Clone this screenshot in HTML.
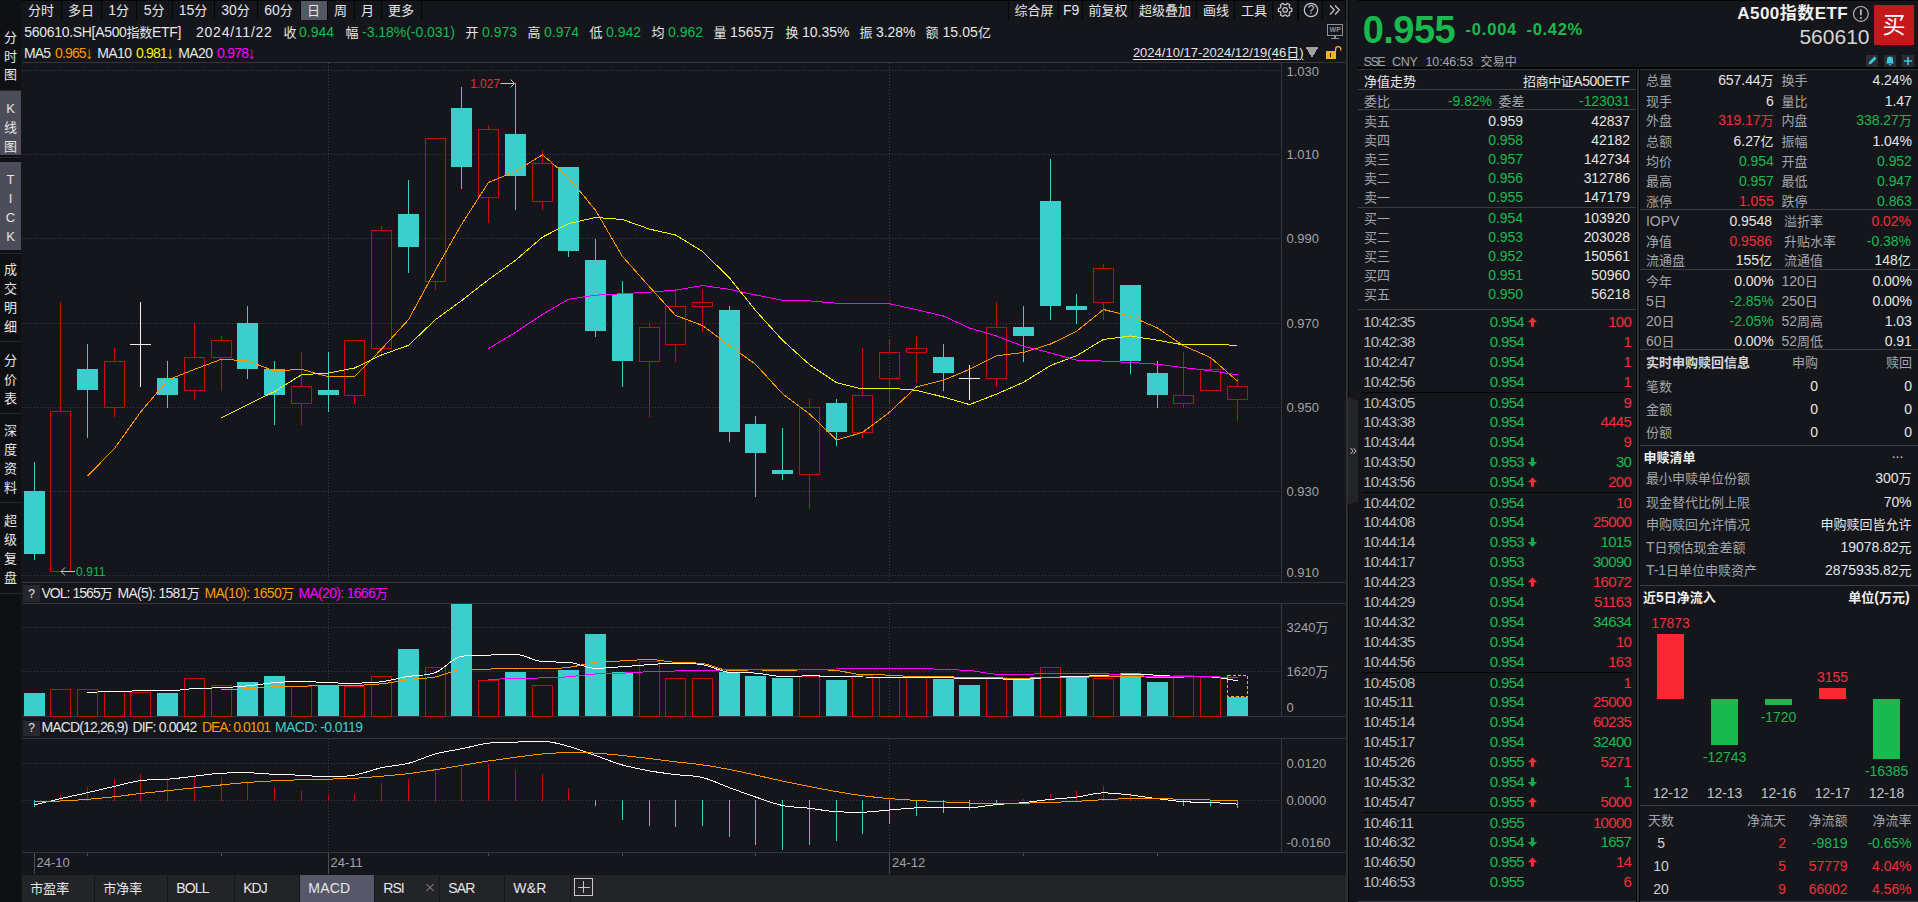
<!DOCTYPE html>
<html lang="zh"><head><meta charset="utf-8"><title>A500指数ETF 560610</title>
<style>
html,body{margin:0;padding:0;background:#14161b;}
body{width:1918px;height:902px;position:relative;overflow:hidden;font-family:"Liberation Sans","Noto Sans CJK SC",sans-serif;}
.t{position:absolute;white-space:nowrap;font-size:14px;letter-spacing:var(--ls,-.06px);--cs:13px;}
.c{font-size:var(--cs);letter-spacing:var(--cls,0);}
.b{position:absolute;}
svg{position:absolute;left:0;top:0;}
svg{shape-rendering:crispEdges;}
svg .aa{shape-rendering:geometricPrecision;}
.bold{font-weight:bold;}
.ar{font-size:17px;line-height:0;position:relative;top:.5px;margin-left:-1px;}
.tk{font-size:15px;letter-spacing:-.68px;}
</style></head><body>
<div class="b" style="left:0px;top:0px;width:21px;height:902px;background:#0e1014;"></div>
<div class="b" style="left:0px;top:91px;width:21px;height:64px;background:#4c4d59;"></div>
<div class="b" style="left:0px;top:162px;width:21px;height:88px;background:#4c4d59;"></div>
<div class="b" style="left:0px;top:90px;width:21px;height:1px;background:#26282d;"></div>
<div class="b" style="left:0px;top:157px;width:21px;height:1px;background:#26282d;"></div>
<div class="b" style="left:0px;top:253px;width:21px;height:1px;background:#26282d;"></div>
<div class="b" style="left:0px;top:341px;width:21px;height:1px;background:#26282d;"></div>
<div class="b" style="left:0px;top:413px;width:21px;height:1px;background:#26282d;"></div>
<div class="b" style="left:0px;top:502px;width:21px;height:1px;background:#26282d;"></div>
<div class="b" style="left:0px;top:593px;width:21px;height:1px;background:#26282d;"></div>
<div class="b" style="left:22px;top:0px;width:1324px;height:1px;background:#050607;"></div>
<div class="b" style="left:61px;top:1px;width:1px;height:19px;background:#050607;"></div>
<div class="b" style="left:101px;top:1px;width:1px;height:19px;background:#050607;"></div>
<div class="b" style="left:136px;top:1px;width:1px;height:19px;background:#050607;"></div>
<div class="b" style="left:172px;top:1px;width:1px;height:19px;background:#050607;"></div>
<div class="b" style="left:214px;top:1px;width:1px;height:19px;background:#050607;"></div>
<div class="b" style="left:257px;top:1px;width:1px;height:19px;background:#050607;"></div>
<div class="b" style="left:300px;top:1px;width:1px;height:19px;background:#050607;"></div>
<div class="b" style="left:301px;top:1px;width:26px;height:19px;background:#565764;"></div>
<div class="b" style="left:327px;top:1px;width:1px;height:19px;background:#050607;"></div>
<div class="b" style="left:354px;top:1px;width:1px;height:19px;background:#050607;"></div>
<div class="b" style="left:381px;top:1px;width:1px;height:19px;background:#050607;"></div>
<div class="b" style="left:421px;top:1px;width:1px;height:19px;background:#050607;"></div>
<div class="b" style="left:1008px;top:1px;width:1px;height:19px;background:#050607;"></div>
<div class="b" style="left:1058px;top:1px;width:1px;height:19px;background:#050607;"></div>
<div class="b" style="left:1082px;top:1px;width:1px;height:19px;background:#050607;"></div>
<div class="b" style="left:1132px;top:1px;width:1px;height:19px;background:#050607;"></div>
<div class="b" style="left:1196px;top:1px;width:1px;height:19px;background:#050607;"></div>
<div class="b" style="left:1234px;top:1px;width:1px;height:19px;background:#050607;"></div>
<div class="b" style="left:1272px;top:1px;width:1px;height:19px;background:#050607;"></div>
<div class="b" style="left:1297px;top:1px;width:2px;height:19px;background:#050607;"></div>
<div class="b" style="left:1322px;top:1px;width:1px;height:19px;background:#050607;"></div>
<div class="b" style="left:23px;top:585px;width:17px;height:17px;background:#26282d;"></div>
<div class="b" style="left:23px;top:721px;width:17px;height:15px;background:#26282d;"></div>
<div class="b" style="left:22px;top:875px;width:1324px;height:27px;background:#232428;"></div>
<div class="b" style="left:94px;top:875px;width:1px;height:27px;background:#14161b;"></div>
<div class="b" style="left:167px;top:875px;width:1px;height:27px;background:#14161b;"></div>
<div class="b" style="left:234px;top:875px;width:1px;height:27px;background:#14161b;"></div>
<div class="b" style="left:300px;top:875px;width:74px;height:27px;background:#565768;"></div>
<div class="b" style="left:299px;top:875px;width:1px;height:27px;background:#14161b;"></div>
<div class="b" style="left:374px;top:875px;width:1px;height:27px;background:#14161b;"></div>
<div class="b" style="left:439px;top:875px;width:1px;height:27px;background:#14161b;"></div>
<div class="b" style="left:504px;top:875px;width:1px;height:27px;background:#14161b;"></div>
<div class="b" style="left:570px;top:875px;width:1px;height:27px;background:#14161b;"></div>
<div class="b" style="left:1346px;top:0px;width:2px;height:902px;background:#2d2f35;"></div>
<div class="b" style="left:1348px;top:0px;width:1px;height:902px;background:#030404;"></div>
<div class="b" style="left:1345px;top:0px;width:1px;height:21px;background:#050607;"></div>
<div class="b" style="left:1358px;top:0px;width:560px;height:1px;background:#030404;"></div>
<div class="b" style="left:1358px;top:901px;width:560px;height:1px;background:#3a3c42;"></div>
<div class="b" style="left:1874px;top:5px;width:40px;height:40px;background:#c4181c;"></div>
<div class="b" style="left:1866px;top:55px;width:12px;height:12px;background:#2a2c33;"></div>
<div class="b" style="left:1884px;top:55px;width:12px;height:12px;background:#2a2c33;"></div>
<div class="b" style="left:1902px;top:55px;width:12px;height:12px;background:#2a2c33;"></div>
<div class="b" style="left:1358px;top:67px;width:560px;height:2px;background:#030404;"></div>
<div class="b" style="left:1358px;top:69px;width:560px;height:1px;background:#2e3036;"></div>
<div class="b" style="left:1636px;top:69px;width:1px;height:833px;background:#030404;"></div>
<div class="b" style="left:1637px;top:69px;width:2px;height:833px;background:#2e3036;"></div>
<div class="b" style="left:1639px;top:69px;width:1px;height:833px;background:#030404;"></div>
<div class="b" style="left:1358px;top:89px;width:278px;height:1px;background:#3a3c42;"></div>
<div class="b" style="left:1358px;top:109px;width:278px;height:1px;background:#3a3c42;"></div>
<div class="b" style="left:1358px;top:207px;width:278px;height:1px;background:#3a3c42;"></div>
<div class="b" style="left:1358px;top:309px;width:278px;height:1px;background:#3a3c42;"></div>
<div class="b" style="left:1362px;top:392px;width:270px;height:1px;background:#050607;"></div>
<div class="b" style="left:1362px;top:492px;width:270px;height:1px;background:#050607;"></div>
<div class="b" style="left:1362px;top:672px;width:270px;height:1px;background:#050607;"></div>
<div class="b" style="left:1362px;top:812px;width:270px;height:1px;background:#050607;"></div>
<div class="b" style="left:1640px;top:209px;width:278px;height:1px;background:#3a3c42;"></div>
<div class="b" style="left:1640px;top:269px;width:278px;height:1px;background:#3a3c42;"></div>
<div class="b" style="left:1640px;top:349px;width:278px;height:1px;background:#3a3c42;"></div>
<div class="b" style="left:1640px;top:445px;width:278px;height:1px;background:#3a3c42;"></div>
<div class="b" style="left:1640px;top:585px;width:278px;height:1px;background:#3a3c42;"></div>
<div class="b" style="left:1657px;top:634px;width:27px;height:65px;background:#fa2832;"></div>
<div class="b" style="left:1711px;top:699px;width:27px;height:46px;background:#18ba50;"></div>
<div class="b" style="left:1765px;top:699px;width:27px;height:6px;background:#18ba50;"></div>
<div class="b" style="left:1819px;top:688px;width:27px;height:11px;background:#fa2832;"></div>
<div class="b" style="left:1873px;top:699px;width:27px;height:60px;background:#18ba50;"></div>
<div class="b" style="left:1640px;top:805px;width:278px;height:1px;background:#3a3c42;"></div>
<svg width="1918" height="902" viewBox="0 0 1918 902">
<g class="aa" fill="none" stroke="#c8c8cc" stroke-width="1.2" stroke-linejoin="round"><path d="M1290.11 8.17L1291.82 8.35L1291.82 11.45L1290.11 11.63L1289.10 13.38L1289.81 14.95L1287.12 16.50L1286.11 15.10L1284.09 15.10L1283.08 16.50L1280.39 14.95L1281.10 13.38L1280.09 11.63L1278.38 11.45L1278.38 8.35L1280.09 8.17L1281.10 6.42L1280.39 4.85L1283.08 3.30L1284.09 4.70L1286.11 4.70L1287.12 3.30L1289.81 4.85L1289.10 6.42z"/><circle cx="1285.1" cy="9.9" r="2.3"/><circle cx="1311" cy="10" r="6.7"/><path d="M1330 5.5l4.3 4.5-4.3 4.5M1335 5.5l4.3 4.5-4.3 4.5"/></g>
<path d="M1305 46.5h14l-7 11z" fill="#a0a0a0"/>
<g><rect x="1325.5" y="51" width="10" height="8" fill="#f0b41e"/><rect x="1329.7" y="53.2" width="1.6" height="3.6" fill="#14161b"/><path class="aa" d="M1335.6 51.5v-2.2a2.6 2.6 0 0 1 5.2 0v1.2" fill="none" stroke="#f0b41e" stroke-width="1.3"/></g>
<g fill="none" stroke="#8e9096" stroke-width="1.2"><rect x="1327.6" y="24.6" width="15" height="10.6"/><path d="M1335 35.2v2.8M1331 38.4h8"/></g>
<line x1="22" x2="1346" y1="62.5" y2="62.5" stroke="#33353b" stroke-width="1"/>
<line x1="22" x2="1346" y1="582.5" y2="582.5" stroke="#33353b" stroke-width="1"/>
<line x1="22" x2="1346" y1="603.5" y2="603.5" stroke="#33353b" stroke-width="1"/>
<line x1="22" x2="1346" y1="716.5" y2="716.5" stroke="#33353b" stroke-width="1"/>
<line x1="22" x2="1346" y1="738.5" y2="738.5" stroke="#33353b" stroke-width="1"/>
<line x1="22" x2="1346" y1="852.5" y2="852.5" stroke="#33353b" stroke-width="1"/>
<line x1="1281.5" x2="1281.5" y1="62" y2="582" stroke="#33353b" stroke-width="1"/>
<line x1="1281.5" x2="1281.5" y1="603" y2="716" stroke="#33353b" stroke-width="1"/>
<line x1="1281.5" x2="1281.5" y1="738" y2="852" stroke="#33353b" stroke-width="1"/>
<line x1="22" x2="1281" y1="70.5" y2="70.5" stroke="#3b3d44" stroke-width="1" stroke-dasharray="1 2"/>
<line x1="22" x2="1281" y1="154.5" y2="154.5" stroke="#3b3d44" stroke-width="1" stroke-dasharray="1 2"/>
<line x1="22" x2="1281" y1="238.5" y2="238.5" stroke="#3b3d44" stroke-width="1" stroke-dasharray="1 2"/>
<line x1="22" x2="1281" y1="323.5" y2="323.5" stroke="#3b3d44" stroke-width="1" stroke-dasharray="1 2"/>
<line x1="22" x2="1281" y1="407.5" y2="407.5" stroke="#3b3d44" stroke-width="1" stroke-dasharray="1 2"/>
<line x1="22" x2="1281" y1="491.5" y2="491.5" stroke="#3b3d44" stroke-width="1" stroke-dasharray="1 2"/>
<line x1="22" x2="1281" y1="575.5" y2="575.5" stroke="#3b3d44" stroke-width="1" stroke-dasharray="1 2"/>
<line x1="22" x2="1281" y1="627.5" y2="627.5" stroke="#3b3d44" stroke-width="1" stroke-dasharray="1 2"/>
<line x1="22" x2="1281" y1="671.5" y2="671.5" stroke="#3b3d44" stroke-width="1" stroke-dasharray="1 2"/>
<line x1="22" x2="1281" y1="763.5" y2="763.5" stroke="#3b3d44" stroke-width="1" stroke-dasharray="1 2"/>
<line x1="22" x2="1281" y1="800.5" y2="800.5" stroke="#3b3d44" stroke-width="1" stroke-dasharray="1 2"/>
<line x1="328.5" x2="328.5" y1="63" y2="582" stroke="#3b3d44" stroke-width="1" stroke-dasharray="1 2"/>
<line x1="328.5" x2="328.5" y1="604" y2="716" stroke="#3b3d44" stroke-width="1" stroke-dasharray="1 2"/>
<line x1="328.5" x2="328.5" y1="739" y2="852" stroke="#3b3d44" stroke-width="1" stroke-dasharray="1 2"/>
<line x1="889.5" x2="889.5" y1="63" y2="582" stroke="#3b3d44" stroke-width="1" stroke-dasharray="1 2"/>
<line x1="889.5" x2="889.5" y1="604" y2="716" stroke="#3b3d44" stroke-width="1" stroke-dasharray="1 2"/>
<line x1="889.5" x2="889.5" y1="739" y2="852" stroke="#3b3d44" stroke-width="1" stroke-dasharray="1 2"/>
<rect x="34" y="462" width="1" height="98" fill="#3ccdcd"/>
<rect x="24" y="491" width="21" height="63" fill="#3ccdcd"/>
<rect x="60" y="302" width="1" height="109" fill="#cc0808"/>
<rect x="50.5" y="411.5" width="20" height="160" fill="none" stroke="#cc0808" stroke-width="1"/>
<rect x="87" y="344" width="1" height="94" fill="#3ccdcd"/>
<rect x="77" y="369" width="21" height="21" fill="#3ccdcd"/>
<rect x="114" y="348" width="1" height="13" fill="#cc0808"/>
<rect x="114" y="407" width="1" height="10" fill="#cc0808"/>
<rect x="104.5" y="361.5" width="20" height="46" fill="none" stroke="#cc0808" stroke-width="1"/>
<rect x="140" y="302" width="1" height="85" fill="#f0f0f0"/>
<rect x="130" y="344" width="21" height="1" fill="#f0f0f0"/>
<rect x="167" y="361" width="1" height="47" fill="#3ccdcd"/>
<rect x="157" y="378" width="21" height="17" fill="#3ccdcd"/>
<rect x="194" y="323" width="1" height="34" fill="#cc0808"/>
<rect x="194" y="390" width="1" height="10" fill="#cc0808"/>
<rect x="184.5" y="357.5" width="20" height="33" fill="none" stroke="#cc0808" stroke-width="1"/>
<rect x="221" y="336" width="1" height="4" fill="#cc0808"/>
<rect x="221" y="357" width="1" height="34" fill="#cc0808"/>
<rect x="211.5" y="340.5" width="20" height="17" fill="none" stroke="#cc0808" stroke-width="1"/>
<rect x="247" y="306" width="1" height="73" fill="#3ccdcd"/>
<rect x="237" y="323" width="21" height="46" fill="#3ccdcd"/>
<rect x="274" y="361" width="1" height="64" fill="#3ccdcd"/>
<rect x="264" y="369" width="21" height="26" fill="#3ccdcd"/>
<rect x="301" y="352" width="1" height="34" fill="#cc0808"/>
<rect x="301" y="403" width="1" height="22" fill="#cc0808"/>
<rect x="291.5" y="386.5" width="20" height="17" fill="none" stroke="#cc0808" stroke-width="1"/>
<rect x="328" y="352" width="1" height="60" fill="#3ccdcd"/>
<rect x="318" y="390" width="21" height="5" fill="#3ccdcd"/>
<rect x="354" y="395" width="1" height="9" fill="#cc0808"/>
<rect x="344.5" y="340.5" width="20" height="55" fill="none" stroke="#cc0808" stroke-width="1"/>
<rect x="381" y="226" width="1" height="4" fill="#cc0808"/>
<rect x="381" y="348" width="1" height="5" fill="#cc0808"/>
<rect x="371.5" y="230.5" width="20" height="118" fill="none" stroke="#cc0808" stroke-width="1"/>
<rect x="408" y="180" width="1" height="93" fill="#3ccdcd"/>
<rect x="398" y="214" width="21" height="33" fill="#3ccdcd"/>
<rect x="435" y="281" width="1" height="9" fill="#cc0808"/>
<rect x="425.5" y="138.5" width="20" height="143" fill="none" stroke="#cc0808" stroke-width="1"/>
<rect x="461" y="87" width="1" height="102" fill="#3ccdcd"/>
<rect x="451" y="108" width="21" height="59" fill="#3ccdcd"/>
<rect x="488" y="125" width="1" height="4" fill="#cc0808"/>
<rect x="488" y="197" width="1" height="26" fill="#cc0808"/>
<rect x="478.5" y="129.5" width="20" height="68" fill="none" stroke="#cc0808" stroke-width="1"/>
<rect x="515" y="83" width="1" height="127" fill="#3ccdcd"/>
<rect x="505" y="134" width="21" height="42" fill="#3ccdcd"/>
<rect x="542" y="150" width="1" height="13" fill="#cc0808"/>
<rect x="542" y="201" width="1" height="9" fill="#cc0808"/>
<rect x="532.5" y="163.5" width="20" height="38" fill="none" stroke="#cc0808" stroke-width="1"/>
<rect x="568" y="167" width="1" height="90" fill="#3ccdcd"/>
<rect x="558" y="167" width="21" height="84" fill="#3ccdcd"/>
<rect x="595" y="239" width="1" height="98" fill="#3ccdcd"/>
<rect x="585" y="260" width="21" height="71" fill="#3ccdcd"/>
<rect x="622" y="281" width="1" height="106" fill="#3ccdcd"/>
<rect x="612" y="294" width="21" height="67" fill="#3ccdcd"/>
<rect x="649" y="323" width="1" height="4" fill="#cc0808"/>
<rect x="649" y="361" width="1" height="56" fill="#cc0808"/>
<rect x="639.5" y="327.5" width="20" height="34" fill="none" stroke="#cc0808" stroke-width="1"/>
<rect x="675" y="289" width="1" height="17" fill="#cc0808"/>
<rect x="675" y="344" width="1" height="18" fill="#cc0808"/>
<rect x="665.5" y="306.5" width="20" height="38" fill="none" stroke="#cc0808" stroke-width="1"/>
<rect x="702" y="289" width="1" height="13" fill="#cc0808"/>
<rect x="702" y="306" width="1" height="26" fill="#cc0808"/>
<rect x="692.5" y="302.5" width="20" height="4" fill="none" stroke="#cc0808" stroke-width="1"/>
<rect x="729" y="306" width="1" height="136" fill="#3ccdcd"/>
<rect x="719" y="310" width="21" height="122" fill="#3ccdcd"/>
<rect x="755" y="416" width="1" height="81" fill="#3ccdcd"/>
<rect x="745" y="424" width="21" height="29" fill="#3ccdcd"/>
<rect x="782" y="428" width="1" height="52" fill="#3ccdcd"/>
<rect x="772" y="470" width="21" height="4" fill="#3ccdcd"/>
<rect x="809" y="399" width="1" height="8" fill="#cc0808"/>
<rect x="809" y="474" width="1" height="35" fill="#cc0808"/>
<rect x="799.5" y="407.5" width="20" height="67" fill="none" stroke="#cc0808" stroke-width="1"/>
<rect x="836" y="399" width="1" height="47" fill="#3ccdcd"/>
<rect x="826" y="403" width="21" height="29" fill="#3ccdcd"/>
<rect x="862" y="348" width="1" height="47" fill="#cc0808"/>
<rect x="862" y="432" width="1" height="6" fill="#cc0808"/>
<rect x="852.5" y="395.5" width="20" height="37" fill="none" stroke="#cc0808" stroke-width="1"/>
<rect x="889" y="340" width="1" height="12" fill="#cc0808"/>
<rect x="889" y="378" width="1" height="26" fill="#cc0808"/>
<rect x="879.5" y="352.5" width="20" height="26" fill="none" stroke="#cc0808" stroke-width="1"/>
<rect x="916" y="336" width="1" height="12" fill="#cc0808"/>
<rect x="916" y="352" width="1" height="31" fill="#cc0808"/>
<rect x="906.5" y="348.5" width="20" height="4" fill="none" stroke="#cc0808" stroke-width="1"/>
<rect x="943" y="344" width="1" height="47" fill="#3ccdcd"/>
<rect x="933" y="357" width="21" height="16" fill="#3ccdcd"/>
<rect x="969" y="365" width="1" height="35" fill="#f0f0f0"/>
<rect x="959" y="378" width="21" height="1" fill="#f0f0f0"/>
<rect x="996" y="302" width="1" height="25" fill="#cc0808"/>
<rect x="996" y="378" width="1" height="9" fill="#cc0808"/>
<rect x="986.5" y="327.5" width="20" height="51" fill="none" stroke="#cc0808" stroke-width="1"/>
<rect x="1023" y="306" width="1" height="56" fill="#3ccdcd"/>
<rect x="1013" y="327" width="21" height="9" fill="#3ccdcd"/>
<rect x="1050" y="159" width="1" height="161" fill="#3ccdcd"/>
<rect x="1040" y="201" width="21" height="105" fill="#3ccdcd"/>
<rect x="1076" y="294" width="1" height="30" fill="#3ccdcd"/>
<rect x="1066" y="306" width="21" height="4" fill="#3ccdcd"/>
<rect x="1103" y="264" width="1" height="4" fill="#cc0808"/>
<rect x="1103" y="302" width="1" height="18" fill="#cc0808"/>
<rect x="1093.5" y="268.5" width="20" height="34" fill="none" stroke="#cc0808" stroke-width="1"/>
<rect x="1130" y="285" width="1" height="89" fill="#3ccdcd"/>
<rect x="1120" y="285" width="21" height="76" fill="#3ccdcd"/>
<rect x="1157" y="361" width="1" height="47" fill="#3ccdcd"/>
<rect x="1147" y="373" width="21" height="22" fill="#3ccdcd"/>
<rect x="1183" y="352" width="1" height="43" fill="#cc0808"/>
<rect x="1183" y="403" width="1" height="5" fill="#cc0808"/>
<rect x="1173.5" y="395.5" width="20" height="8" fill="none" stroke="#cc0808" stroke-width="1"/>
<rect x="1210" y="357" width="1" height="12" fill="#cc0808"/>
<rect x="1200.5" y="369.5" width="20" height="21" fill="none" stroke="#cc0808" stroke-width="1"/>
<rect x="1237" y="378" width="1" height="8" fill="#cc0808"/>
<rect x="1237" y="399" width="1" height="22" fill="#cc0808"/>
<rect x="1227.5" y="386.5" width="20" height="13" fill="none" stroke="#cc0808" stroke-width="1"/>
<path d="M87.5 476.2L114.5 448.4L140.5 412.2L167.5 380.2L194.5 369.3L221.5 359.2L247.5 360.9L274.5 371.0L301.5 369.3L328.5 376.8L354.5 376.8L381.5 349.1L408.5 319.6L435.5 270.0L461.5 224.5L488.5 182.4L515.5 171.5L542.5 154.7L568.5 177.4L595.5 210.2L622.5 256.5L649.5 286.8L675.5 315.4L702.5 325.5L729.5 345.7L755.5 364.2L782.5 393.7L809.5 413.9L836.5 440.0L862.5 432.4L889.5 412.2L916.5 386.9L943.5 380.2L969.5 369.3L996.5 355.8L1023.5 352.4L1050.5 344.0L1076.5 331.4L1103.5 309.5L1130.5 316.2L1157.5 328.0L1183.5 345.7L1210.5 357.5L1237.5 381.1" fill="none" stroke="#ff9800" stroke-width="1" stroke-linejoin="round"/>
<path d="M221.5 417.7L247.5 404.6L274.5 391.6L301.5 374.7L328.5 373.1L354.5 368.0L381.5 355.0L408.5 345.3L435.5 319.6L461.5 300.7L488.5 279.6L515.5 260.3L542.5 237.1L568.5 223.7L595.5 217.4L622.5 219.5L649.5 229.1L675.5 235.0L702.5 251.4L729.5 278.0L755.5 310.4L782.5 340.2L809.5 364.6L836.5 382.7L862.5 389.0L889.5 388.2L916.5 390.3L943.5 397.0L969.5 404.6L996.5 394.1L1023.5 382.3L1050.5 365.5L1076.5 355.8L1103.5 339.4L1130.5 336.0L1157.5 340.2L1183.5 344.9L1210.5 344.4L1237.5 345.3" fill="none" stroke="#f5f500" stroke-width="1" stroke-linejoin="round"/>
<path d="M488.5 348.6L515.5 332.4L542.5 314.4L568.5 299.2L595.5 295.2L622.5 293.7L649.5 292.1L675.5 290.2L702.5 285.5L729.5 289.3L755.5 295.0L782.5 300.3L809.5 300.9L836.5 303.2L862.5 303.2L889.5 303.8L916.5 309.7L943.5 316.0L969.5 328.0L996.5 336.0L1023.5 346.3L1050.5 352.9L1076.5 360.2L1103.5 361.1L1130.5 362.5L1157.5 364.2L1183.5 367.6L1210.5 370.7L1237.5 374.9" fill="none" stroke="#ff00ff" stroke-width="1" stroke-linejoin="round"/>
<path d="M500.5 83.5h14M510.5 79.5l4 4-4 4" fill="none" stroke="#c8c8c8" stroke-width="1" class="aa"/>
<path d="M75 571.5h-14M65 567.5l-4 4 4 4" fill="none" stroke="#c8c8c8" stroke-width="1" class="aa"/>
<rect x="24" y="693" width="21" height="23" fill="#3ccdcd"/>
<rect x="50.5" y="689.5" width="20" height="27" fill="none" stroke="#cc0808"/>
<rect x="77.5" y="689.5" width="20" height="27" fill="none" stroke="#cc0808"/>
<rect x="104.5" y="691.5" width="20" height="25" fill="none" stroke="#cc0808"/>
<rect x="130.5" y="692.5" width="20" height="24" fill="none" stroke="#cc0808"/>
<rect x="157" y="693" width="21" height="23" fill="#3ccdcd"/>
<rect x="184.5" y="678.5" width="20" height="38" fill="none" stroke="#cc0808"/>
<rect x="211.5" y="685.5" width="20" height="31" fill="none" stroke="#cc0808"/>
<rect x="237" y="682" width="21" height="34" fill="#3ccdcd"/>
<rect x="264" y="676" width="21" height="40" fill="#3ccdcd"/>
<rect x="291.5" y="686.5" width="20" height="30" fill="none" stroke="#cc0808"/>
<rect x="318" y="685" width="21" height="31" fill="#3ccdcd"/>
<rect x="344.5" y="686.5" width="20" height="30" fill="none" stroke="#cc0808"/>
<rect x="371.5" y="676.5" width="20" height="40" fill="none" stroke="#cc0808"/>
<rect x="398" y="649" width="21" height="67" fill="#3ccdcd"/>
<rect x="425.5" y="667.5" width="20" height="49" fill="none" stroke="#cc0808"/>
<rect x="451" y="604" width="21" height="112" fill="#3ccdcd"/>
<rect x="478.5" y="680.5" width="20" height="36" fill="none" stroke="#cc0808"/>
<rect x="505" y="672" width="21" height="44" fill="#3ccdcd"/>
<rect x="532.5" y="685.5" width="20" height="31" fill="none" stroke="#cc0808"/>
<rect x="558" y="670" width="21" height="46" fill="#3ccdcd"/>
<rect x="585" y="634" width="21" height="82" fill="#3ccdcd"/>
<rect x="612" y="672" width="21" height="44" fill="#3ccdcd"/>
<rect x="639.5" y="661.5" width="20" height="55" fill="none" stroke="#cc0808"/>
<rect x="665.5" y="678.5" width="20" height="38" fill="none" stroke="#cc0808"/>
<rect x="692.5" y="678.5" width="20" height="38" fill="none" stroke="#cc0808"/>
<rect x="719" y="672" width="21" height="44" fill="#3ccdcd"/>
<rect x="745" y="676" width="21" height="40" fill="#3ccdcd"/>
<rect x="772" y="678" width="21" height="38" fill="#3ccdcd"/>
<rect x="799.5" y="676.5" width="20" height="40" fill="none" stroke="#cc0808"/>
<rect x="826" y="680" width="21" height="36" fill="#3ccdcd"/>
<rect x="852.5" y="675.5" width="20" height="41" fill="none" stroke="#cc0808"/>
<rect x="879.5" y="677.5" width="20" height="39" fill="none" stroke="#cc0808"/>
<rect x="906.5" y="677.5" width="20" height="39" fill="none" stroke="#cc0808"/>
<rect x="933" y="679" width="21" height="37" fill="#3ccdcd"/>
<rect x="959" y="685" width="21" height="31" fill="#3ccdcd"/>
<rect x="986.5" y="677.5" width="20" height="39" fill="none" stroke="#cc0808"/>
<rect x="1013" y="679" width="21" height="37" fill="#3ccdcd"/>
<rect x="1040.5" y="667.5" width="20" height="49" fill="none" stroke="#cc0808"/>
<rect x="1066" y="676" width="21" height="40" fill="#3ccdcd"/>
<rect x="1093.5" y="678.5" width="20" height="38" fill="none" stroke="#cc0808"/>
<rect x="1120" y="673" width="21" height="43" fill="#3ccdcd"/>
<rect x="1147" y="682" width="21" height="34" fill="#3ccdcd"/>
<rect x="1173.5" y="675.5" width="20" height="41" fill="none" stroke="#cc0808"/>
<rect x="1200.5" y="677.5" width="20" height="39" fill="none" stroke="#cc0808"/>
<rect x="1227" y="697" width="21" height="19" fill="#3ccdcd"/>
<rect x="1227.5" y="675.5" width="20" height="21" fill="none" stroke="#f0b41e" stroke-dasharray="3 2"/>
<path d="M87.5 692.3C96.5 692.1 105.5 691.8 114.5 691.5C123.2 691.3 131.8 690.9 140.5 690.9C149.5 690.9 158.5 690.9 167.5 690.9C176.5 690.9 185.5 689.1 194.5 688.6C203.5 688.1 212.5 688.1 221.5 687.7C230.2 687.2 238.8 686.7 247.5 685.9C256.5 685.0 265.5 683.5 274.5 682.7C283.5 682.0 292.5 681.3 301.5 681.3C310.5 681.3 319.5 682.5 328.5 682.8C337.2 683.1 345.8 683.1 354.5 683.1C363.5 683.1 372.5 682.9 381.5 681.8C390.5 680.7 399.5 677.9 408.5 676.4C417.5 674.9 426.5 676.0 435.5 672.5C444.2 669.2 452.8 657.4 461.5 656.3C470.5 655.1 479.5 655.5 488.5 655.1C497.5 654.8 506.5 654.4 515.5 654.4C524.5 654.4 533.5 661.0 542.5 661.7C551.2 662.3 559.8 661.7 568.5 662.3C577.5 663.0 586.5 668.3 595.5 668.3C604.5 668.3 613.5 667.3 622.5 666.7C631.5 666.1 640.5 665.2 649.5 664.6C658.2 664.0 666.8 663.2 675.5 663.2C684.5 663.2 693.5 663.2 702.5 664.7C711.5 666.3 720.5 671.6 729.5 672.4C738.2 673.1 746.8 672.5 755.5 673.1C764.5 673.8 773.5 676.5 782.5 676.5C791.5 676.5 800.5 675.9 809.5 675.9C818.5 675.9 827.5 676.2 836.5 676.4C845.2 676.6 853.8 676.9 862.5 677.0C871.5 677.1 880.5 677.1 889.5 677.1C898.5 677.1 907.5 677.0 916.5 677.0C925.5 677.0 934.5 677.3 943.5 677.6C952.2 677.9 960.8 678.4 969.5 678.6C978.5 678.8 987.5 678.8 996.5 678.9C1005.5 679.0 1014.5 679.3 1023.5 679.3C1032.5 679.3 1041.5 677.7 1050.5 677.3C1059.2 676.9 1067.8 677.0 1076.5 676.7C1085.5 676.3 1094.5 675.6 1103.5 675.2C1112.5 674.9 1121.5 674.5 1130.5 674.5C1139.5 674.5 1148.5 674.8 1157.5 675.2C1166.2 675.6 1174.8 676.5 1183.5 676.7C1192.5 676.9 1201.5 676.7 1210.5 676.9C1219.5 677.1 1228.5 679.4 1237.5 680.7" fill="none" stroke="#ffffff" stroke-width="1"/>
<path d="M221.5 690.0C230.2 689.6 238.8 689.2 247.5 688.7C256.5 688.2 265.5 687.2 274.5 686.8C283.5 686.4 292.5 686.3 301.5 686.1C310.5 685.9 319.5 685.8 328.5 685.7C337.2 685.6 345.8 685.7 354.5 685.4C363.5 685.1 372.5 684.8 381.5 683.8C390.5 682.9 399.5 680.7 408.5 679.6C417.5 678.4 426.5 678.6 435.5 676.9C444.2 675.3 452.8 670.0 461.5 669.5C470.5 669.1 479.5 669.3 488.5 669.1C497.5 668.9 506.5 668.1 515.5 668.1C524.5 668.1 533.5 669.0 542.5 669.0C551.2 669.0 559.8 668.5 568.5 667.4C577.5 666.3 586.5 663.4 595.5 662.3C604.5 661.2 613.5 661.4 622.5 660.9C631.5 660.5 640.5 659.5 649.5 659.5C658.2 659.5 666.8 661.8 675.5 662.4C684.5 663.1 693.5 662.4 702.5 663.5C711.5 664.6 720.5 670.4 729.5 670.4C738.2 670.4 746.8 669.9 755.5 669.9C764.5 669.9 773.5 670.5 782.5 670.5C791.5 670.5 800.5 669.6 809.5 669.6C818.5 669.6 827.5 669.7 836.5 670.6C845.2 671.4 853.8 674.3 862.5 674.7C871.5 675.1 880.5 674.8 889.5 675.1C898.5 675.5 907.5 676.7 916.5 676.7C925.5 676.8 934.5 676.7 943.5 676.8C952.2 676.8 960.8 677.3 969.5 677.5C978.5 677.7 987.5 677.8 996.5 677.9C1005.5 678.1 1014.5 678.2 1023.5 678.2C1032.5 678.2 1041.5 677.1 1050.5 677.1C1059.2 677.1 1067.8 677.1 1076.5 677.1C1085.5 677.1 1094.5 677.0 1103.5 676.9C1112.5 676.8 1121.5 676.7 1130.5 676.7C1139.5 676.7 1148.5 677.2 1157.5 677.2C1166.2 677.2 1174.8 677.1 1183.5 677.0C1192.5 676.9 1201.5 676.8 1210.5 676.8C1219.5 676.8 1228.5 677.6 1237.5 678.0" fill="none" stroke="#ff9800" stroke-width="1"/>
<path d="M488.5 679.5C497.5 679.2 506.5 678.7 515.5 678.4C524.5 678.1 533.5 678.2 542.5 677.9C551.2 677.6 559.8 677.4 568.5 676.8C577.5 676.1 586.5 674.6 595.5 674.0C604.5 673.4 613.5 673.5 622.5 673.1C631.5 672.8 640.5 672.0 649.5 671.7C658.2 671.3 666.8 671.2 675.5 671.0C684.5 670.7 693.5 670.4 702.5 670.2C711.5 670.0 720.5 670.1 729.5 669.9C738.2 669.8 746.8 669.6 755.5 669.5C764.5 669.4 773.5 669.3 782.5 669.3C791.5 669.3 800.5 669.3 809.5 669.3C818.5 669.3 827.5 669.1 836.5 669.0C845.2 668.9 853.8 668.7 862.5 668.5C871.5 668.3 880.5 668.0 889.5 668.0C898.5 668.0 907.5 668.0 916.5 668.1C925.5 668.2 934.5 669.2 943.5 669.6C952.2 670.0 960.8 669.8 969.5 670.5C978.5 671.3 987.5 674.1 996.5 674.1C1005.5 674.1 1014.5 674.1 1023.5 674.1C1032.5 674.0 1041.5 674.0 1050.5 673.8C1059.2 673.7 1067.8 673.4 1076.5 673.4C1085.5 673.4 1094.5 673.4 1103.5 673.7C1112.5 674.1 1121.5 675.3 1130.5 675.7C1139.5 676.1 1148.5 676.0 1157.5 676.2C1166.2 676.4 1174.8 676.9 1183.5 676.9C1192.5 676.9 1201.5 676.8 1210.5 676.8C1219.5 676.8 1228.5 677.4 1237.5 677.7" fill="none" stroke="#ff00ff" stroke-width="1"/>
<rect x="34" y="800" width="1" height="7" fill="#3ccdcd"/>
<rect x="60" y="795" width="1" height="6" fill="#cc0808"/>
<rect x="87" y="787" width="1" height="14" fill="#cc0808"/>
<rect x="114" y="779" width="1" height="22" fill="#cc0808"/>
<rect x="140" y="774" width="1" height="27" fill="#cc0808"/>
<rect x="167" y="777" width="1" height="24" fill="#cc0808"/>
<rect x="194" y="777" width="1" height="24" fill="#cc0808"/>
<rect x="221" y="777" width="1" height="24" fill="#cc0808"/>
<rect x="247" y="781" width="1" height="20" fill="#cc0808"/>
<rect x="274" y="787" width="1" height="14" fill="#cc0808"/>
<rect x="301" y="791" width="1" height="10" fill="#cc0808"/>
<rect x="328" y="795" width="1" height="6" fill="#cc0808"/>
<rect x="354" y="794" width="1" height="7" fill="#cc0808"/>
<rect x="381" y="783" width="1" height="18" fill="#cc0808"/>
<rect x="408" y="779" width="1" height="22" fill="#cc0808"/>
<rect x="435" y="768" width="1" height="33" fill="#cc0808"/>
<rect x="461" y="767" width="1" height="34" fill="#cc0808"/>
<rect x="488" y="764" width="1" height="37" fill="#cc0808"/>
<rect x="515" y="770" width="1" height="31" fill="#cc0808"/>
<rect x="542" y="774" width="1" height="27" fill="#cc0808"/>
<rect x="568" y="788" width="1" height="13" fill="#cc0808"/>
<rect x="595" y="800" width="1" height="6" fill="#3ccdcd"/>
<rect x="622" y="800" width="1" height="20" fill="#3ccdcd"/>
<rect x="649" y="800" width="1" height="26" fill="#3ccdcd"/>
<rect x="675" y="800" width="1" height="27" fill="#3ccdcd"/>
<rect x="702" y="800" width="1" height="26" fill="#3ccdcd"/>
<rect x="729" y="800" width="1" height="37" fill="#3ccdcd"/>
<rect x="755" y="800" width="1" height="45" fill="#3ccdcd"/>
<rect x="782" y="800" width="1" height="50" fill="#3ccdcd"/>
<rect x="809" y="800" width="1" height="45" fill="#3ccdcd"/>
<rect x="836" y="800" width="1" height="41" fill="#3ccdcd"/>
<rect x="862" y="800" width="1" height="34" fill="#3ccdcd"/>
<rect x="889" y="800" width="1" height="24" fill="#3ccdcd"/>
<rect x="916" y="800" width="1" height="16" fill="#3ccdcd"/>
<rect x="943" y="800" width="1" height="13" fill="#3ccdcd"/>
<rect x="969" y="800" width="1" height="10" fill="#3ccdcd"/>
<rect x="996" y="800" width="1" height="3" fill="#3ccdcd"/>
<rect x="1023" y="799" width="1" height="2" fill="#cc0808"/>
<rect x="1050" y="794" width="1" height="7" fill="#cc0808"/>
<rect x="1076" y="791" width="1" height="10" fill="#cc0808"/>
<rect x="1103" y="786" width="1" height="15" fill="#cc0808"/>
<rect x="1130" y="793" width="1" height="8" fill="#cc0808"/>
<rect x="1183" y="800" width="1" height="6" fill="#3ccdcd"/>
<rect x="1210" y="800" width="1" height="6" fill="#3ccdcd"/>
<rect x="1237" y="800" width="1" height="8" fill="#3ccdcd"/>
<path d="M34.5 804.8C43.2 802.8 51.8 800.7 60.5 798.7C69.5 796.6 78.5 794.7 87.5 792.7C96.5 790.6 105.5 788.4 114.5 786.4C123.2 784.4 131.8 781.8 140.5 780.6C149.5 779.4 158.5 780.0 167.5 779.3C176.5 778.5 185.5 777.3 194.5 776.2C203.5 775.2 212.5 773.6 221.5 773.2C230.2 772.8 238.8 772.8 247.5 772.8C256.5 772.8 265.5 773.9 274.5 774.3C283.5 774.7 292.5 774.8 301.5 775.3C310.5 775.7 319.5 776.8 328.5 776.8C337.2 776.8 345.8 776.6 354.5 775.1C363.5 773.6 372.5 769.7 381.5 767.7C390.5 765.7 399.5 765.6 408.5 763.3C417.5 761.0 426.5 756.3 435.5 753.9C444.2 751.5 452.8 750.5 461.5 748.8C470.5 747.0 479.5 744.2 488.5 743.2C497.5 742.1 506.5 742.4 515.5 742.1C524.5 741.8 533.5 741.2 542.5 741.2C551.2 741.2 559.8 744.0 568.5 746.3C577.5 748.7 586.5 752.4 595.5 755.5C604.5 758.7 613.5 762.4 622.5 765.0C631.5 767.5 640.5 769.2 649.5 770.9C658.2 772.4 666.8 773.5 675.5 774.6C684.5 775.7 693.5 775.3 702.5 777.5C711.5 779.7 720.5 784.4 729.5 787.7C738.2 790.8 746.8 794.1 755.5 797.0C764.5 800.0 773.5 803.6 782.5 805.5C791.5 807.4 800.5 807.2 809.5 808.3C818.5 809.3 827.5 811.3 836.5 811.8C845.2 812.2 853.8 812.2 862.5 812.2C871.5 812.2 880.5 810.7 889.5 810.0C898.5 809.3 907.5 808.2 916.5 807.9C925.5 807.6 934.5 807.7 943.5 807.6C952.2 807.6 960.8 807.6 969.5 807.6C978.5 807.5 987.5 805.4 996.5 804.6C1005.5 803.7 1014.5 803.5 1023.5 802.6C1032.5 801.7 1041.5 800.3 1050.5 799.4C1059.2 798.5 1067.8 798.1 1076.5 797.1C1085.5 796.0 1094.5 792.9 1103.5 792.9C1112.5 792.9 1121.5 794.1 1130.5 795.0C1139.5 796.0 1148.5 797.6 1157.5 798.7C1166.2 799.8 1174.8 801.1 1183.5 801.7C1192.5 802.3 1201.5 802.1 1210.5 802.5C1219.5 802.9 1228.5 803.5 1237.5 804.1" fill="none" stroke="#ffffff" stroke-width="1"/>
<path d="M34.5 801.6C43.2 801.4 51.8 801.4 60.5 801.0C69.5 800.6 78.5 800.1 87.5 799.3C96.5 798.6 105.5 797.7 114.5 796.8C123.2 795.8 131.8 794.5 140.5 793.5C149.5 792.5 158.5 791.6 167.5 790.7C176.5 789.7 185.5 788.8 194.5 787.8C203.5 786.8 212.5 785.8 221.5 784.9C230.2 784.0 238.8 783.1 247.5 782.5C256.5 781.8 265.5 781.3 274.5 780.8C283.5 780.4 292.5 780.0 301.5 779.7C310.5 779.4 319.5 779.4 328.5 779.1C337.2 778.9 345.8 778.8 354.5 778.3C363.5 777.8 372.5 777.0 381.5 776.2C390.5 775.4 399.5 774.7 408.5 773.6C417.5 772.5 426.5 771.1 435.5 769.7C444.2 768.3 452.8 766.9 461.5 765.5C470.5 764.0 479.5 762.4 488.5 761.0C497.5 759.7 506.5 758.4 515.5 757.2C524.5 756.1 533.5 754.8 542.5 754.0C551.2 753.3 559.8 752.5 568.5 752.5C577.5 752.5 586.5 752.6 595.5 753.1C604.5 753.6 613.5 754.6 622.5 755.5C631.5 756.4 640.5 757.5 649.5 758.6C658.2 759.6 666.8 760.7 675.5 761.8C684.5 762.8 693.5 763.6 702.5 764.9C711.5 766.2 720.5 767.8 729.5 769.5C738.2 771.1 746.8 773.1 755.5 775.0C764.5 776.9 773.5 779.2 782.5 781.1C791.5 783.0 800.5 784.8 809.5 786.5C818.5 788.3 827.5 790.0 836.5 791.6C845.2 793.1 853.8 794.6 862.5 795.7C871.5 796.9 880.5 797.8 889.5 798.6C898.5 799.4 907.5 799.9 916.5 800.4C925.5 801.0 934.5 801.4 943.5 801.9C952.2 802.3 960.8 802.8 969.5 803.0C978.5 803.3 987.5 803.3 996.5 803.3C1005.5 803.3 1014.5 803.3 1023.5 803.2C1032.5 803.0 1041.5 802.7 1050.5 802.4C1059.2 802.1 1067.8 801.8 1076.5 801.3C1085.5 800.9 1094.5 800.1 1103.5 799.7C1112.5 799.2 1121.5 798.7 1130.5 798.7C1139.5 798.7 1148.5 798.7 1157.5 798.7C1166.2 798.7 1174.8 799.1 1183.5 799.3C1192.5 799.5 1201.5 799.7 1210.5 800.0C1219.5 800.2 1228.5 800.5 1237.5 800.8" fill="none" stroke="#ff9800" stroke-width="1"/>
<line x1="87.5" x2="87.5" y1="853" y2="856" stroke="#4a4c52" stroke-width="1"/>
<line x1="221.5" x2="221.5" y1="853" y2="856" stroke="#4a4c52" stroke-width="1"/>
<line x1="488.5" x2="488.5" y1="853" y2="856" stroke="#4a4c52" stroke-width="1"/>
<line x1="622.5" x2="622.5" y1="853" y2="856" stroke="#4a4c52" stroke-width="1"/>
<line x1="755.5" x2="755.5" y1="853" y2="856" stroke="#4a4c52" stroke-width="1"/>
<line x1="1023.5" x2="1023.5" y1="853" y2="856" stroke="#4a4c52" stroke-width="1"/>
<line x1="1157.5" x2="1157.5" y1="853" y2="856" stroke="#4a4c52" stroke-width="1"/>
<line x1="34.5" x2="34.5" y1="853" y2="874" stroke="#4a4c52" stroke-width="1"/>
<line x1="328.5" x2="328.5" y1="853" y2="874" stroke="#4a4c52" stroke-width="1"/>
<line x1="889.5" x2="889.5" y1="853" y2="874" stroke="#4a4c52" stroke-width="1"/>
<path d="M426.5 884l7 7M433.5 884l-7 7" stroke="#a0a0a0" stroke-width="1" class="aa"/>
<g fill="none" stroke="#c8c8c8"><rect x="574.5" y="878.5" width="18" height="17"/><path d="M583.5 881v12M577.5 887.5h12"/></g>
<path d="M1348 397l10 4v100l-10 4z" fill="#232428" class="aa"/>
<path d="M1350.5 448l2.5 3-2.5 3M1353.5 448l2.5 3-2.5 3" fill="none" stroke="#c0c0c0" stroke-width="1" class="aa"/>
<circle cx="1860.9" cy="13.9" r="7.4" fill="none" stroke="#b4b4b4" stroke-width="1.2" class="aa"/>
<path d="M1860.9 9.3v6M1860.9 17v1.7" stroke="#b4b4b4" stroke-width="1.8" class="aa"/>
<g class="aa"><path d="M1868.5 64.5l1-3 5-5 2 2-5 5z" fill="#3cc8dc"/><path d="M1886 63.5c1-1 1-2.5 1-4a3 3 0 0 1 6 0c0 1.5 0 3 1 4zM1888.8 64.3h2.4v.9h-2.4z" fill="#3cc8dc"/><path d="M1908 57v8M1904 61h8" stroke="#3cc8dc" stroke-width="1.6" fill="none"/></g>
<path d="M1532.5 317.2l4.6 5h-3v4.6h-3.2v-4.6h-3z" fill="#f52a38" class="aa"/>
<path d="M1532.5 467.0l4.6-5h-3v-4.6h-3.2v4.6h-3z" fill="#18a84c" class="aa"/>
<path d="M1532.5 477.2l4.6 5h-3v4.6h-3.2v-4.6h-3z" fill="#f52a38" class="aa"/>
<path d="M1532.5 547.0l4.6-5h-3v-4.6h-3.2v4.6h-3z" fill="#18a84c" class="aa"/>
<path d="M1532.5 577.1999999999999l4.6 5h-3v4.6h-3.2v-4.6h-3z" fill="#f52a38" class="aa"/>
<path d="M1532.5 757.1999999999999l4.6 5h-3v4.6h-3.2v-4.6h-3z" fill="#f52a38" class="aa"/>
<path d="M1532.5 787.0l4.6-5h-3v-4.6h-3.2v4.6h-3z" fill="#18a84c" class="aa"/>
<path d="M1532.5 797.1999999999999l4.6 5h-3v4.6h-3.2v-4.6h-3z" fill="#f52a38" class="aa"/>
<path d="M1532.5 847.0l4.6-5h-3v-4.6h-3.2v4.6h-3z" fill="#18a84c" class="aa"/>
<path d="M1532.5 857.1999999999999l4.6 5h-3v4.6h-3.2v-4.6h-3z" fill="#f52a38" class="aa"/>
</svg>
<div class="t" style="left:-89.5px;width:200px;text-align:center;top:28.0px;line-height:20px;color:#e6e6e6;font-size:13px"><span class="c">分</span></div>
<div class="t" style="left:-89.5px;width:200px;text-align:center;top:46.5px;line-height:20px;color:#e6e6e6;font-size:13px"><span class="c">时</span></div>
<div class="t" style="left:-89.5px;width:200px;text-align:center;top:65.0px;line-height:20px;color:#e6e6e6;font-size:13px"><span class="c">图</span></div>
<div class="t" style="left:-89.5px;width:200px;text-align:center;top:98.7px;line-height:20px;color:#e6e6e6;font-size:13px">K</div>
<div class="t" style="left:-89.5px;width:200px;text-align:center;top:118.0px;line-height:20px;color:#e6e6e6;font-size:13px"><span class="c">线</span></div>
<div class="t" style="left:-89.5px;width:200px;text-align:center;top:136.5px;line-height:20px;color:#e6e6e6;font-size:13px"><span class="c">图</span></div>
<div class="t" style="left:-89.5px;width:200px;text-align:center;top:170.0px;line-height:20px;color:#e6e6e6;font-size:13px">T</div>
<div class="t" style="left:-89.5px;width:200px;text-align:center;top:189.0px;line-height:20px;color:#e6e6e6;font-size:13px">I</div>
<div class="t" style="left:-89.5px;width:200px;text-align:center;top:208.0px;line-height:20px;color:#e6e6e6;font-size:13px">C</div>
<div class="t" style="left:-89.5px;width:200px;text-align:center;top:226.7px;line-height:20px;color:#e6e6e6;font-size:13px">K</div>
<div class="t" style="left:-89.5px;width:200px;text-align:center;top:260.0px;line-height:20px;color:#e6e6e6;font-size:13px"><span class="c">成</span></div>
<div class="t" style="left:-89.5px;width:200px;text-align:center;top:279.0px;line-height:20px;color:#e6e6e6;font-size:13px"><span class="c">交</span></div>
<div class="t" style="left:-89.5px;width:200px;text-align:center;top:298.0px;line-height:20px;color:#e6e6e6;font-size:13px"><span class="c">明</span></div>
<div class="t" style="left:-89.5px;width:200px;text-align:center;top:317.0px;line-height:20px;color:#e6e6e6;font-size:13px"><span class="c">细</span></div>
<div class="t" style="left:-89.5px;width:200px;text-align:center;top:351.0px;line-height:20px;color:#e6e6e6;font-size:13px"><span class="c">分</span></div>
<div class="t" style="left:-89.5px;width:200px;text-align:center;top:370.0px;line-height:20px;color:#e6e6e6;font-size:13px"><span class="c">价</span></div>
<div class="t" style="left:-89.5px;width:200px;text-align:center;top:389.0px;line-height:20px;color:#e6e6e6;font-size:13px"><span class="c">表</span></div>
<div class="t" style="left:-89.5px;width:200px;text-align:center;top:421.0px;line-height:20px;color:#e6e6e6;font-size:13px"><span class="c">深</span></div>
<div class="t" style="left:-89.5px;width:200px;text-align:center;top:440.0px;line-height:20px;color:#e6e6e6;font-size:13px"><span class="c">度</span></div>
<div class="t" style="left:-89.5px;width:200px;text-align:center;top:459.0px;line-height:20px;color:#e6e6e6;font-size:13px"><span class="c">资</span></div>
<div class="t" style="left:-89.5px;width:200px;text-align:center;top:478.0px;line-height:20px;color:#e6e6e6;font-size:13px"><span class="c">料</span></div>
<div class="t" style="left:-89.5px;width:200px;text-align:center;top:511.0px;line-height:20px;color:#e6e6e6;font-size:13px"><span class="c">超</span></div>
<div class="t" style="left:-89.5px;width:200px;text-align:center;top:530.0px;line-height:20px;color:#e6e6e6;font-size:13px"><span class="c">级</span></div>
<div class="t" style="left:-89.5px;width:200px;text-align:center;top:549.0px;line-height:20px;color:#e6e6e6;font-size:13px"><span class="c">复</span></div>
<div class="t" style="left:-89.5px;width:200px;text-align:center;top:568.0px;line-height:20px;color:#e6e6e6;font-size:13px"><span class="c">盘</span></div>
<div class="t" style="left:-58.9px;width:200px;text-align:center;top:0.1px;line-height:20px;color:#e6e6e6;"><span class="c">分时</span></div>
<div class="t" style="left:-18.900000000000006px;width:200px;text-align:center;top:0.1px;line-height:20px;color:#e6e6e6;"><span class="c">多日</span></div>
<div class="t" style="left:18.599999999999994px;width:200px;text-align:center;top:0.1px;line-height:20px;color:#e6e6e6;">1<span class="c">分</span></div>
<div class="t" style="left:54.099999999999994px;width:200px;text-align:center;top:0.1px;line-height:20px;color:#e6e6e6;">5<span class="c">分</span></div>
<div class="t" style="left:93.1px;width:200px;text-align:center;top:0.1px;line-height:20px;color:#e6e6e6;">15<span class="c">分</span></div>
<div class="t" style="left:135.6px;width:200px;text-align:center;top:0.1px;line-height:20px;color:#e6e6e6;">30<span class="c">分</span></div>
<div class="t" style="left:178.60000000000002px;width:200px;text-align:center;top:0.1px;line-height:20px;color:#e6e6e6;">60<span class="c">分</span></div>
<div class="t" style="left:213.60000000000002px;width:200px;text-align:center;top:0.1px;line-height:20px;color:#e6e6e6;"><span class="c">日</span></div>
<div class="t" style="left:240.60000000000002px;width:200px;text-align:center;top:0.1px;line-height:20px;color:#e6e6e6;"><span class="c">周</span></div>
<div class="t" style="left:267.6px;width:200px;text-align:center;top:0.1px;line-height:20px;color:#e6e6e6;"><span class="c">月</span></div>
<div class="t" style="left:301.1px;width:200px;text-align:center;top:0.1px;line-height:20px;color:#e6e6e6;"><span class="c">更多</span></div>
<div class="t" style="left:934.0px;width:200px;text-align:center;top:0.1px;line-height:20px;color:#e6e6e6;"><span class="c">综合屏</span></div>
<div class="t" style="left:971.0px;width:200px;text-align:center;top:0.1px;line-height:20px;color:#e6e6e6;">F9</div>
<div class="t" style="left:1008.0px;width:200px;text-align:center;top:0.1px;line-height:20px;color:#e6e6e6;"><span class="c">前复权</span></div>
<div class="t" style="left:1065.0px;width:200px;text-align:center;top:0.1px;line-height:20px;color:#e6e6e6;"><span class="c">超级叠加</span></div>
<div class="t" style="left:1116.0px;width:200px;text-align:center;top:0.1px;line-height:20px;color:#e6e6e6;"><span class="c">画线</span></div>
<div class="t" style="left:1154.0px;width:200px;text-align:center;top:0.1px;line-height:20px;color:#e6e6e6;"><span class="c">工具</span></div>
<div class="t" style="left:1211.1px;width:200px;text-align:center;top:0.2px;line-height:20px;color:#c8c8cc;font-size:12px;letter-spacing:0">?</div>
<div class="t" style="left:24.3px;top:22.3px;line-height:20px;color:#e6e6e6;;--ls:-0.31px;--cls:-0.31px">560610.SH[A500<span class="c">指数</span>ETF]</div>
<div class="t" style="left:196px;top:22.3px;line-height:20px;color:#e6e6e6;;--ls:0.76px;--cls:0.76px">2024/11/22</div>
<div class="t" style="left:283.5px;top:22.3px;line-height:20px;color:#e6e6e6;"><span class="c">收</span></div>
<div class="t" style="left:299px;top:22.3px;line-height:20px;color:#18ba50;;--ls:-0.01px;--cls:-0.01px">0.944</div>
<div class="t" style="left:345.5px;top:22.3px;line-height:20px;color:#e6e6e6;"><span class="c">幅</span></div>
<div class="t" style="left:362px;top:22.3px;line-height:20px;color:#18ba50;;--ls:-0.03px;--cls:-0.03px">-3.18%(-0.031)</div>
<div class="t" style="left:465.5px;top:22.3px;line-height:20px;color:#e6e6e6;"><span class="c">开</span></div>
<div class="t" style="left:482px;top:22.3px;line-height:20px;color:#18ba50;;--ls:-0.01px;--cls:-0.01px">0.973</div>
<div class="t" style="left:527.5px;top:22.3px;line-height:20px;color:#e6e6e6;"><span class="c">高</span></div>
<div class="t" style="left:544px;top:22.3px;line-height:20px;color:#18ba50;;--ls:-0.01px;--cls:-0.01px">0.974</div>
<div class="t" style="left:589.5px;top:22.3px;line-height:20px;color:#e6e6e6;"><span class="c">低</span></div>
<div class="t" style="left:606px;top:22.3px;line-height:20px;color:#18ba50;;--ls:-0.01px;--cls:-0.01px">0.942</div>
<div class="t" style="left:651.5px;top:22.3px;line-height:20px;color:#e6e6e6;"><span class="c">均</span></div>
<div class="t" style="left:668px;top:22.3px;line-height:20px;color:#18ba50;;--ls:-0.01px;--cls:-0.01px">0.962</div>
<div class="t" style="left:713.5px;top:22.3px;line-height:20px;color:#e6e6e6;"><span class="c">量</span></div>
<div class="t" style="left:730px;top:22.3px;line-height:20px;color:#e6e6e6;;--ls:0.10px;--cls:0.10px">1565<span class="c">万</span></div>
<div class="t" style="left:785.5px;top:22.3px;line-height:20px;color:#e6e6e6;"><span class="c">换</span></div>
<div class="t" style="left:802px;top:22.3px;line-height:20px;color:#e6e6e6;;--ls:0.00px;--cls:0.00px">10.35%</div>
<div class="t" style="left:859.5px;top:22.3px;line-height:20px;color:#e6e6e6;"><span class="c">振</span></div>
<div class="t" style="left:876px;top:22.3px;line-height:20px;color:#e6e6e6;;--ls:-0.04px;--cls:-0.04px">3.28%</div>
<div class="t" style="left:925.5px;top:22.3px;line-height:20px;color:#e6e6e6;"><span class="c">额</span></div>
<div class="t" style="left:942.5px;top:22.3px;line-height:20px;color:#e6e6e6;;--ls:0.07px;--cls:0.07px">15.05<span class="c">亿</span></div>
<div class="t" style="left:24px;top:43.0px;line-height:20px;color:#e6e6e6;;--ls:-0.93px;--cls:-0.93px">MA5</div>
<div class="t" style="left:55px;top:43.0px;line-height:20px;color:#ff9800;;--ls:-0.86px;--cls:-0.86px">0.965<span class="ar">↓</span></div>
<div class="t" style="left:97.3px;top:43.0px;line-height:20px;color:#e6e6e6;;--ls:-0.65px;--cls:-0.65px">MA10</div>
<div class="t" style="left:136px;top:43.0px;line-height:20px;color:#f5f500;;--ls:-0.86px;--cls:-0.86px">0.981<span class="ar">↓</span></div>
<div class="t" style="left:178.3px;top:43.0px;line-height:20px;color:#e6e6e6;;--ls:-0.65px;--cls:-0.65px">MA20</div>
<div class="t" style="left:217px;top:43.0px;line-height:20px;color:#ff00ff;;--ls:-0.76px;--cls:-0.76px">0.978<span class="ar">↓</span></div>
<div class="t" style="right:614.5px;top:42.8px;line-height:20px;color:#e6e6e6;font-size:13px;letter-spacing:0;text-decoration:underline;text-underline-offset:2px">2024/10/17-2024/12/19(46<span class="c">日</span>)</div>
<div class="t" style="left:1235.2px;width:200px;text-align:center;top:20.0px;line-height:20px;color:#8e9096;font-size:7px;font-weight:bold;letter-spacing:0">WP</div>
<div class="t" style="left:1286.5px;top:62.0px;line-height:20px;color:#a0a3aa;font-size:13px;letter-spacing:0">1.030</div>
<div class="t" style="left:1286.5px;top:144.8px;line-height:20px;color:#a0a3aa;font-size:13px;letter-spacing:0">1.010</div>
<div class="t" style="left:1286.5px;top:229.0px;line-height:20px;color:#a0a3aa;font-size:13px;letter-spacing:0">0.990</div>
<div class="t" style="left:1286.5px;top:313.7px;line-height:20px;color:#a0a3aa;font-size:13px;letter-spacing:0">0.970</div>
<div class="t" style="left:1286.5px;top:397.6px;line-height:20px;color:#a0a3aa;font-size:13px;letter-spacing:0">0.950</div>
<div class="t" style="left:1286.5px;top:481.5px;line-height:20px;color:#a0a3aa;font-size:13px;letter-spacing:0">0.930</div>
<div class="t" style="left:1286.5px;top:563.3px;line-height:20px;color:#a0a3aa;font-size:13px;letter-spacing:0">0.910</div>
<div class="t" style="left:1286.5px;top:617.6px;line-height:20px;color:#a0a3aa;font-size:13px;letter-spacing:0">3240<span class="c">万</span></div>
<div class="t" style="left:1286.5px;top:661.5px;line-height:20px;color:#a0a3aa;font-size:13px;letter-spacing:0">1620<span class="c">万</span></div>
<div class="t" style="left:1286.5px;top:697.8px;line-height:20px;color:#a0a3aa;font-size:13px;letter-spacing:0">0</div>
<div class="t" style="left:1286.5px;top:753.7px;line-height:20px;color:#a0a3aa;font-size:13px;letter-spacing:0">0.0120</div>
<div class="t" style="left:1286.5px;top:791.2px;line-height:20px;color:#a0a3aa;font-size:13px;letter-spacing:0">0.0000</div>
<div class="t" style="left:1286.5px;top:832.5px;line-height:20px;color:#a0a3aa;font-size:13px;letter-spacing:0">-0.0160</div>
<div class="t" style="left:470.3px;top:73.5px;line-height:20px;color:#e03040;font-size:12px;--ls:-0.11px;--cls:-0.11px">1.027</div>
<div class="t" style="left:76px;top:561.5px;line-height:20px;color:#18ba50;font-size:12px;--ls:0.07px;--cls:0.07px">0.911</div>
<div class="t" style="left:-68.5px;width:200px;text-align:center;top:583.8px;line-height:20px;color:#e6e6e6;font-size:12px">?</div>
<div class="t" style="left:41.5px;top:582.7px;line-height:20px;color:#e6e6e6;;--ls:-0.97px;--cls:-0.97px">VOL: 1565<span class="c">万</span></div>
<div class="t" style="left:117.5px;top:582.7px;line-height:20px;color:#e6e6e6;;--ls:-0.71px;--cls:-0.71px">MA(5): 1581<span class="c">万</span></div>
<div class="t" style="left:204.5px;top:582.7px;line-height:20px;color:#ff9800;;--ls:-0.69px;--cls:-0.69px">MA(10): 1650<span class="c">万</span></div>
<div class="t" style="left:298.5px;top:582.7px;line-height:20px;color:#ff00ff;;--ls:-0.69px;--cls:-0.69px">MA(20): 1666<span class="c">万</span></div>
<div class="t" style="left:-68.5px;width:200px;text-align:center;top:718.3px;line-height:20px;color:#e6e6e6;font-size:12px">?</div>
<div class="t" style="left:41.5px;top:717.3px;line-height:20px;color:#e6e6e6;;--ls:-0.87px;--cls:-0.87px">MACD(12,26,9)</div>
<div class="t" style="left:132.5px;top:717.3px;line-height:20px;color:#e6e6e6;;--ls:-0.83px;--cls:-0.83px">DIF: 0.0042</div>
<div class="t" style="left:202px;top:717.3px;line-height:20px;color:#ff9800;;--ls:-1.04px;--cls:-1.04px">DEA: 0.0101</div>
<div class="t" style="left:275px;top:717.3px;line-height:20px;color:#3ccdcd;;--ls:-0.62px;--cls:-0.62px">MACD: -0.0119</div>
<div class="t" style="left:36.5px;top:852.8px;line-height:20px;color:#a0a3aa;font-size:13px;letter-spacing:0">24-10</div>
<div class="t" style="left:330.5px;top:852.8px;line-height:20px;color:#a0a3aa;font-size:13px;letter-spacing:0">24-11</div>
<div class="t" style="left:892px;top:852.8px;line-height:20px;color:#a0a3aa;font-size:13px;letter-spacing:0">24-12</div>
<div class="t" style="left:30.3px;top:878.0px;line-height:20px;color:#e6e6e6;"><span class="c">市盈率</span></div>
<div class="t" style="left:103.3px;top:878.0px;line-height:20px;color:#e6e6e6;"><span class="c">市净率</span></div>
<div class="t" style="left:176.3px;top:878.0px;line-height:20px;color:#e6e6e6;;--ls:-0.88px;--cls:-0.88px">BOLL</div>
<div class="t" style="left:243.3px;top:878.0px;line-height:20px;color:#e6e6e6;;--ls:-1.05px;--cls:-1.05px">KDJ</div>
<div class="t" style="left:308.3px;top:878.0px;line-height:20px;color:#e6e6e6;;--ls:0.17px;--cls:0.17px">MACD</div>
<div class="t" style="left:383.3px;top:878.0px;line-height:20px;color:#e6e6e6;;--ls:-1.02px;--cls:-1.02px">RSI</div>
<div class="t" style="left:448.3px;top:878.0px;line-height:20px;color:#e6e6e6;;--ls:-0.86px;--cls:-0.86px">SAR</div>
<div class="t" style="left:513.3px;top:878.0px;line-height:20px;color:#e6e6e6;;--ls:0.14px;--cls:0.14px">W&amp;R</div>
<div class="t bold" style="left:1362.8px;top:10.3px;line-height:40px;color:#18ba50;font-size:38px;--ls:-0.56px;--cls:-0.56px">0.955</div>
<div class="t bold" style="left:1465.5px;top:19.2px;line-height:20px;color:#18ba50;font-size:16.5px;--ls:0.80px;--cls:0.80px">-0.004</div>
<div class="t bold" style="left:1526.5px;top:19.2px;line-height:20px;color:#18ba50;font-size:16.5px;--ls:0.69px;--cls:0.69px">-0.42%</div>
<div class="t bold" style="right:69.79999999999995px;top:3.8px;line-height:20px;color:#f0f0f0;font-size:17px;--cs:17px;--ls:0.46px;--cls:0.46px">A500<span class="c">指数</span>ETF</div>
<div class="t" style="right:48.5px;top:25.3px;line-height:24px;color:#d6d6d6;font-size:21px;letter-spacing:0">560610</div>
<div class="t" style="left:1794px;width:200px;text-align:center;top:12.0px;line-height:26px;color:#ffffff;--cs:23px"><span class="c">买</span></div>
<div class="t" style="left:1363.5px;top:51.5px;line-height:20px;color:#a3a6ad;font-size:12.5px;--cs:12px;--ls:-1.41px;--cls:-1.41px">SSE</div>
<div class="t" style="left:1392px;top:51.5px;line-height:20px;color:#a3a6ad;font-size:12.5px;--cs:12px;--ls:-0.30px;--cls:-0.30px">CNY</div>
<div class="t" style="left:1425.5px;top:51.5px;line-height:20px;color:#a3a6ad;font-size:12.5px;--cs:12px;--ls:-0.12px;--cls:-0.12px">10:46:53</div>
<div class="t" style="left:1480.5px;top:51.5px;line-height:20px;color:#a3a6ad;font-size:12.5px;--cs:12px;--ls:0.14px;--cls:0.14px"><span class="c">交易中</span></div>
<div class="t" style="left:1364px;top:70.5px;line-height:20px;color:#e6e6e6;"><span class="c">净值走势</span></div>
<div class="t" style="right:288.70000000000005px;top:70.5px;line-height:20px;color:#e6e6e6;;--ls:-0.45px;--cls:-0.45px"><span class="c">招商中证</span>A500ETF</div>
<div class="t" style="left:1364px;top:90.5px;line-height:20px;color:#a3a6ad;"><span class="c">委比</span></div>
<div class="t" style="right:426px;top:90.5px;line-height:20px;color:#18ba50;">-9.82%</div>
<div class="t" style="left:1498.5px;top:90.5px;line-height:20px;color:#a3a6ad;"><span class="c">委差</span></div>
<div class="t" style="right:288px;top:90.5px;line-height:20px;color:#18ba50;">-123031</div>
<div class="t" style="left:1364px;top:111.3px;line-height:20px;color:#a3a6ad;"><span class="c">卖五</span></div>
<div class="t" style="right:395px;top:111.3px;line-height:20px;color:#e6e6e6;">0.959</div>
<div class="t" style="right:288px;top:111.3px;line-height:20px;color:#e6e6e6;">42837</div>
<div class="t" style="left:1364px;top:130.3px;line-height:20px;color:#a3a6ad;"><span class="c">卖四</span></div>
<div class="t" style="right:395px;top:130.3px;line-height:20px;color:#18ba50;">0.958</div>
<div class="t" style="right:288px;top:130.3px;line-height:20px;color:#e6e6e6;">42182</div>
<div class="t" style="left:1364px;top:149.3px;line-height:20px;color:#a3a6ad;"><span class="c">卖三</span></div>
<div class="t" style="right:395px;top:149.3px;line-height:20px;color:#18ba50;">0.957</div>
<div class="t" style="right:288px;top:149.3px;line-height:20px;color:#e6e6e6;">142734</div>
<div class="t" style="left:1364px;top:168.3px;line-height:20px;color:#a3a6ad;"><span class="c">卖二</span></div>
<div class="t" style="right:395px;top:168.3px;line-height:20px;color:#18ba50;">0.956</div>
<div class="t" style="right:288px;top:168.3px;line-height:20px;color:#e6e6e6;">312786</div>
<div class="t" style="left:1364px;top:187.3px;line-height:20px;color:#a3a6ad;"><span class="c">卖一</span></div>
<div class="t" style="right:395px;top:187.3px;line-height:20px;color:#18ba50;">0.955</div>
<div class="t" style="right:288px;top:187.3px;line-height:20px;color:#e6e6e6;">147179</div>
<div class="t" style="left:1364px;top:207.8px;line-height:20px;color:#a3a6ad;"><span class="c">买一</span></div>
<div class="t" style="right:395px;top:207.8px;line-height:20px;color:#18ba50;">0.954</div>
<div class="t" style="right:288px;top:207.8px;line-height:20px;color:#e6e6e6;">103920</div>
<div class="t" style="left:1364px;top:226.8px;line-height:20px;color:#a3a6ad;"><span class="c">买二</span></div>
<div class="t" style="right:395px;top:226.8px;line-height:20px;color:#18ba50;">0.953</div>
<div class="t" style="right:288px;top:226.8px;line-height:20px;color:#e6e6e6;">203028</div>
<div class="t" style="left:1364px;top:245.8px;line-height:20px;color:#a3a6ad;"><span class="c">买三</span></div>
<div class="t" style="right:395px;top:245.8px;line-height:20px;color:#18ba50;">0.952</div>
<div class="t" style="right:288px;top:245.8px;line-height:20px;color:#e6e6e6;">150561</div>
<div class="t" style="left:1364px;top:264.8px;line-height:20px;color:#a3a6ad;"><span class="c">买四</span></div>
<div class="t" style="right:395px;top:264.8px;line-height:20px;color:#18ba50;">0.951</div>
<div class="t" style="right:288px;top:264.8px;line-height:20px;color:#e6e6e6;">50960</div>
<div class="t" style="left:1364px;top:283.8px;line-height:20px;color:#a3a6ad;"><span class="c">买五</span></div>
<div class="t" style="right:395px;top:283.8px;line-height:20px;color:#18ba50;">0.950</div>
<div class="t" style="right:288px;top:283.8px;line-height:20px;color:#e6e6e6;">56218</div>
<div class="t tk" style="left:1363.2px;top:312.4px;line-height:20px;color:#b8babe;letter-spacing:-.9px">10:42:35</div>
<div class="t tk" style="right:394px;top:312.4px;line-height:20px;color:#18ba50;">0.954</div>
<div class="t tk" style="right:286.79999999999995px;top:312.4px;line-height:20px;color:#f2303a;">100</div>
<div class="t tk" style="left:1363.2px;top:332.4px;line-height:20px;color:#b8babe;letter-spacing:-.9px">10:42:38</div>
<div class="t tk" style="right:394px;top:332.4px;line-height:20px;color:#18ba50;">0.954</div>
<div class="t tk" style="right:286.79999999999995px;top:332.4px;line-height:20px;color:#f2303a;">1</div>
<div class="t tk" style="left:1363.2px;top:352.4px;line-height:20px;color:#b8babe;letter-spacing:-.9px">10:42:47</div>
<div class="t tk" style="right:394px;top:352.4px;line-height:20px;color:#18ba50;">0.954</div>
<div class="t tk" style="right:286.79999999999995px;top:352.4px;line-height:20px;color:#f2303a;">1</div>
<div class="t tk" style="left:1363.2px;top:372.4px;line-height:20px;color:#b8babe;letter-spacing:-.9px">10:42:56</div>
<div class="t tk" style="right:394px;top:372.4px;line-height:20px;color:#18ba50;">0.954</div>
<div class="t tk" style="right:286.79999999999995px;top:372.4px;line-height:20px;color:#f2303a;">1</div>
<div class="t tk" style="left:1363.2px;top:393.4px;line-height:20px;color:#b8babe;letter-spacing:-.9px">10:43:05</div>
<div class="t tk" style="right:394px;top:393.4px;line-height:20px;color:#18ba50;">0.954</div>
<div class="t tk" style="right:286.79999999999995px;top:393.4px;line-height:20px;color:#f2303a;">9</div>
<div class="t tk" style="left:1363.2px;top:412.4px;line-height:20px;color:#b8babe;letter-spacing:-.9px">10:43:38</div>
<div class="t tk" style="right:394px;top:412.4px;line-height:20px;color:#18ba50;">0.954</div>
<div class="t tk" style="right:286.79999999999995px;top:412.4px;line-height:20px;color:#f2303a;">4445</div>
<div class="t tk" style="left:1363.2px;top:432.4px;line-height:20px;color:#b8babe;letter-spacing:-.9px">10:43:44</div>
<div class="t tk" style="right:394px;top:432.4px;line-height:20px;color:#18ba50;">0.954</div>
<div class="t tk" style="right:286.79999999999995px;top:432.4px;line-height:20px;color:#f2303a;">9</div>
<div class="t tk" style="left:1363.2px;top:452.4px;line-height:20px;color:#b8babe;letter-spacing:-.9px">10:43:50</div>
<div class="t tk" style="right:394px;top:452.4px;line-height:20px;color:#18ba50;">0.953</div>
<div class="t tk" style="right:286.79999999999995px;top:452.4px;line-height:20px;color:#18ba50;">30</div>
<div class="t tk" style="left:1363.2px;top:472.4px;line-height:20px;color:#b8babe;letter-spacing:-.9px">10:43:56</div>
<div class="t tk" style="right:394px;top:472.4px;line-height:20px;color:#18ba50;">0.954</div>
<div class="t tk" style="right:286.79999999999995px;top:472.4px;line-height:20px;color:#f2303a;">200</div>
<div class="t tk" style="left:1363.2px;top:493.4px;line-height:20px;color:#b8babe;letter-spacing:-.9px">10:44:02</div>
<div class="t tk" style="right:394px;top:493.4px;line-height:20px;color:#18ba50;">0.954</div>
<div class="t tk" style="right:286.79999999999995px;top:493.4px;line-height:20px;color:#f2303a;">10</div>
<div class="t tk" style="left:1363.2px;top:512.4px;line-height:20px;color:#b8babe;letter-spacing:-.9px">10:44:08</div>
<div class="t tk" style="right:394px;top:512.4px;line-height:20px;color:#18ba50;">0.954</div>
<div class="t tk" style="right:286.79999999999995px;top:512.4px;line-height:20px;color:#f2303a;">25000</div>
<div class="t tk" style="left:1363.2px;top:532.4px;line-height:20px;color:#b8babe;letter-spacing:-.9px">10:44:14</div>
<div class="t tk" style="right:394px;top:532.4px;line-height:20px;color:#18ba50;">0.953</div>
<div class="t tk" style="right:286.79999999999995px;top:532.4px;line-height:20px;color:#18ba50;">1015</div>
<div class="t tk" style="left:1363.2px;top:552.4px;line-height:20px;color:#b8babe;letter-spacing:-.9px">10:44:17</div>
<div class="t tk" style="right:394px;top:552.4px;line-height:20px;color:#18ba50;">0.953</div>
<div class="t tk" style="right:286.79999999999995px;top:552.4px;line-height:20px;color:#18ba50;">30090</div>
<div class="t tk" style="left:1363.2px;top:572.4px;line-height:20px;color:#b8babe;letter-spacing:-.9px">10:44:23</div>
<div class="t tk" style="right:394px;top:572.4px;line-height:20px;color:#18ba50;">0.954</div>
<div class="t tk" style="right:286.79999999999995px;top:572.4px;line-height:20px;color:#f2303a;">16072</div>
<div class="t tk" style="left:1363.2px;top:592.4px;line-height:20px;color:#b8babe;letter-spacing:-.9px">10:44:29</div>
<div class="t tk" style="right:394px;top:592.4px;line-height:20px;color:#18ba50;">0.954</div>
<div class="t tk" style="right:286.79999999999995px;top:592.4px;line-height:20px;color:#f2303a;">51163</div>
<div class="t tk" style="left:1363.2px;top:612.4px;line-height:20px;color:#b8babe;letter-spacing:-.9px">10:44:32</div>
<div class="t tk" style="right:394px;top:612.4px;line-height:20px;color:#18ba50;">0.954</div>
<div class="t tk" style="right:286.79999999999995px;top:612.4px;line-height:20px;color:#18ba50;">34634</div>
<div class="t tk" style="left:1363.2px;top:632.4px;line-height:20px;color:#b8babe;letter-spacing:-.9px">10:44:35</div>
<div class="t tk" style="right:394px;top:632.4px;line-height:20px;color:#18ba50;">0.954</div>
<div class="t tk" style="right:286.79999999999995px;top:632.4px;line-height:20px;color:#f2303a;">10</div>
<div class="t tk" style="left:1363.2px;top:652.4px;line-height:20px;color:#b8babe;letter-spacing:-.9px">10:44:56</div>
<div class="t tk" style="right:394px;top:652.4px;line-height:20px;color:#18ba50;">0.954</div>
<div class="t tk" style="right:286.79999999999995px;top:652.4px;line-height:20px;color:#f2303a;">163</div>
<div class="t tk" style="left:1363.2px;top:673.4px;line-height:20px;color:#b8babe;letter-spacing:-.9px">10:45:08</div>
<div class="t tk" style="right:394px;top:673.4px;line-height:20px;color:#18ba50;">0.954</div>
<div class="t tk" style="right:286.79999999999995px;top:673.4px;line-height:20px;color:#f2303a;">1</div>
<div class="t tk" style="left:1363.2px;top:692.4px;line-height:20px;color:#b8babe;letter-spacing:-.9px">10:45:11</div>
<div class="t tk" style="right:394px;top:692.4px;line-height:20px;color:#18ba50;">0.954</div>
<div class="t tk" style="right:286.79999999999995px;top:692.4px;line-height:20px;color:#f2303a;">25000</div>
<div class="t tk" style="left:1363.2px;top:712.4px;line-height:20px;color:#b8babe;letter-spacing:-.9px">10:45:14</div>
<div class="t tk" style="right:394px;top:712.4px;line-height:20px;color:#18ba50;">0.954</div>
<div class="t tk" style="right:286.79999999999995px;top:712.4px;line-height:20px;color:#f2303a;">60235</div>
<div class="t tk" style="left:1363.2px;top:732.4px;line-height:20px;color:#b8babe;letter-spacing:-.9px">10:45:17</div>
<div class="t tk" style="right:394px;top:732.4px;line-height:20px;color:#18ba50;">0.954</div>
<div class="t tk" style="right:286.79999999999995px;top:732.4px;line-height:20px;color:#18ba50;">32400</div>
<div class="t tk" style="left:1363.2px;top:752.4px;line-height:20px;color:#b8babe;letter-spacing:-.9px">10:45:26</div>
<div class="t tk" style="right:394px;top:752.4px;line-height:20px;color:#18ba50;">0.955</div>
<div class="t tk" style="right:286.79999999999995px;top:752.4px;line-height:20px;color:#f2303a;">5271</div>
<div class="t tk" style="left:1363.2px;top:772.4px;line-height:20px;color:#b8babe;letter-spacing:-.9px">10:45:32</div>
<div class="t tk" style="right:394px;top:772.4px;line-height:20px;color:#18ba50;">0.954</div>
<div class="t tk" style="right:286.79999999999995px;top:772.4px;line-height:20px;color:#18ba50;">1</div>
<div class="t tk" style="left:1363.2px;top:792.4px;line-height:20px;color:#b8babe;letter-spacing:-.9px">10:45:47</div>
<div class="t tk" style="right:394px;top:792.4px;line-height:20px;color:#18ba50;">0.955</div>
<div class="t tk" style="right:286.79999999999995px;top:792.4px;line-height:20px;color:#f2303a;">5000</div>
<div class="t tk" style="left:1363.2px;top:813.4px;line-height:20px;color:#b8babe;letter-spacing:-.9px">10:46:11</div>
<div class="t tk" style="right:394px;top:813.4px;line-height:20px;color:#18ba50;">0.955</div>
<div class="t tk" style="right:286.79999999999995px;top:813.4px;line-height:20px;color:#f2303a;">10000</div>
<div class="t tk" style="left:1363.2px;top:832.4px;line-height:20px;color:#b8babe;letter-spacing:-.9px">10:46:32</div>
<div class="t tk" style="right:394px;top:832.4px;line-height:20px;color:#18ba50;">0.954</div>
<div class="t tk" style="right:286.79999999999995px;top:832.4px;line-height:20px;color:#18ba50;">1657</div>
<div class="t tk" style="left:1363.2px;top:852.4px;line-height:20px;color:#b8babe;letter-spacing:-.9px">10:46:50</div>
<div class="t tk" style="right:394px;top:852.4px;line-height:20px;color:#18ba50;">0.955</div>
<div class="t tk" style="right:286.79999999999995px;top:852.4px;line-height:20px;color:#f2303a;">14</div>
<div class="t tk" style="left:1363.2px;top:872.4px;line-height:20px;color:#b8babe;letter-spacing:-.9px">10:46:53</div>
<div class="t tk" style="right:394px;top:872.4px;line-height:20px;color:#18ba50;">0.955</div>
<div class="t tk" style="right:286.79999999999995px;top:872.4px;line-height:20px;color:#f2303a;">6</div>
<div class="t" style="left:1646px;top:69.8px;line-height:20px;color:#a3a6ad;"><span class="c">总量</span></div>
<div class="t" style="right:144.4000000000001px;top:69.8px;line-height:20px;color:#e6e6e6;">657.44<span class="c">万</span></div>
<div class="t" style="left:1781.5px;top:69.8px;line-height:20px;color:#a3a6ad;"><span class="c">换手</span></div>
<div class="t" style="right:6.2000000000000455px;top:69.8px;line-height:20px;color:#e6e6e6;">4.24%</div>
<div class="t" style="left:1646px;top:90.5px;line-height:20px;color:#a3a6ad;"><span class="c">现手</span></div>
<div class="t" style="right:144.4000000000001px;top:90.5px;line-height:20px;color:#e6e6e6;">6</div>
<div class="t" style="left:1781.5px;top:90.5px;line-height:20px;color:#a3a6ad;"><span class="c">量比</span></div>
<div class="t" style="right:6.2000000000000455px;top:90.5px;line-height:20px;color:#e6e6e6;">1.47</div>
<div class="t" style="left:1646px;top:110.4px;line-height:20px;color:#a3a6ad;"><span class="c">外盘</span></div>
<div class="t" style="right:144.4000000000001px;top:110.4px;line-height:20px;color:#f2303a;">319.17<span class="c">万</span></div>
<div class="t" style="left:1781.5px;top:110.4px;line-height:20px;color:#a3a6ad;"><span class="c">内盘</span></div>
<div class="t" style="right:6.2000000000000455px;top:110.4px;line-height:20px;color:#18ba50;">338.27<span class="c">万</span></div>
<div class="t" style="left:1646px;top:131.0px;line-height:20px;color:#a3a6ad;"><span class="c">总额</span></div>
<div class="t" style="right:144.4000000000001px;top:131.0px;line-height:20px;color:#e6e6e6;">6.27<span class="c">亿</span></div>
<div class="t" style="left:1781.5px;top:131.0px;line-height:20px;color:#a3a6ad;"><span class="c">振幅</span></div>
<div class="t" style="right:6.2000000000000455px;top:131.0px;line-height:20px;color:#e6e6e6;">1.04%</div>
<div class="t" style="left:1646px;top:150.8px;line-height:20px;color:#a3a6ad;"><span class="c">均价</span></div>
<div class="t" style="right:144.4000000000001px;top:150.8px;line-height:20px;color:#18ba50;">0.954</div>
<div class="t" style="left:1781.5px;top:150.8px;line-height:20px;color:#a3a6ad;"><span class="c">开盘</span></div>
<div class="t" style="right:6.2000000000000455px;top:150.8px;line-height:20px;color:#18ba50;">0.952</div>
<div class="t" style="left:1646px;top:171.3px;line-height:20px;color:#a3a6ad;"><span class="c">最高</span></div>
<div class="t" style="right:144.4000000000001px;top:171.3px;line-height:20px;color:#18ba50;">0.957</div>
<div class="t" style="left:1781.5px;top:171.3px;line-height:20px;color:#a3a6ad;"><span class="c">最低</span></div>
<div class="t" style="right:6.2000000000000455px;top:171.3px;line-height:20px;color:#18ba50;">0.947</div>
<div class="t" style="left:1646px;top:191.0px;line-height:20px;color:#a3a6ad;"><span class="c">涨停</span></div>
<div class="t" style="right:144.4000000000001px;top:191.0px;line-height:20px;color:#f2303a;">1.055</div>
<div class="t" style="left:1781.5px;top:191.0px;line-height:20px;color:#a3a6ad;"><span class="c">跌停</span></div>
<div class="t" style="right:6.2000000000000455px;top:191.0px;line-height:20px;color:#18ba50;">0.863</div>
<div class="t" style="left:1646px;top:210.8px;line-height:20px;color:#a3a6ad;">IOPV</div>
<div class="t" style="right:146px;top:210.8px;line-height:20px;color:#e6e6e6;">0.9548</div>
<div class="t" style="left:1784px;top:210.8px;line-height:20px;color:#a3a6ad;"><span class="c">溢折率</span></div>
<div class="t" style="right:7.2000000000000455px;top:210.8px;line-height:20px;color:#f2303a;">0.02%</div>
<div class="t" style="left:1646px;top:230.5px;line-height:20px;color:#a3a6ad;"><span class="c">净值</span></div>
<div class="t" style="right:146px;top:230.5px;line-height:20px;color:#f2303a;">0.9586</div>
<div class="t" style="left:1784px;top:230.5px;line-height:20px;color:#a3a6ad;"><span class="c">升贴水率</span></div>
<div class="t" style="right:7.2000000000000455px;top:230.5px;line-height:20px;color:#18ba50;">-0.38%</div>
<div class="t" style="left:1646px;top:250.2px;line-height:20px;color:#a3a6ad;"><span class="c">流通盘</span></div>
<div class="t" style="right:146px;top:250.2px;line-height:20px;color:#e6e6e6;">155<span class="c">亿</span></div>
<div class="t" style="left:1784px;top:250.2px;line-height:20px;color:#a3a6ad;"><span class="c">流通值</span></div>
<div class="t" style="right:7.2000000000000455px;top:250.2px;line-height:20px;color:#e6e6e6;">148<span class="c">亿</span></div>
<div class="t" style="left:1646px;top:270.5px;line-height:20px;color:#a3a6ad;"><span class="c">今年</span></div>
<div class="t" style="right:144.4000000000001px;top:270.5px;line-height:20px;color:#e6e6e6;">0.00%</div>
<div class="t" style="left:1781.5px;top:270.5px;line-height:20px;color:#a3a6ad;">120<span class="c">日</span></div>
<div class="t" style="right:6.2000000000000455px;top:270.5px;line-height:20px;color:#e6e6e6;">0.00%</div>
<div class="t" style="left:1646px;top:290.5px;line-height:20px;color:#a3a6ad;">5<span class="c">日</span></div>
<div class="t" style="right:144.4000000000001px;top:290.5px;line-height:20px;color:#18ba50;">-2.85%</div>
<div class="t" style="left:1781.5px;top:290.5px;line-height:20px;color:#a3a6ad;">250<span class="c">日</span></div>
<div class="t" style="right:6.2000000000000455px;top:290.5px;line-height:20px;color:#e6e6e6;">0.00%</div>
<div class="t" style="left:1646px;top:310.5px;line-height:20px;color:#a3a6ad;">20<span class="c">日</span></div>
<div class="t" style="right:144.4000000000001px;top:310.5px;line-height:20px;color:#18ba50;">-2.05%</div>
<div class="t" style="left:1781.5px;top:310.5px;line-height:20px;color:#a3a6ad;">52<span class="c">周高</span></div>
<div class="t" style="right:6.2000000000000455px;top:310.5px;line-height:20px;color:#e6e6e6;">1.03</div>
<div class="t" style="left:1646px;top:330.5px;line-height:20px;color:#a3a6ad;">60<span class="c">日</span></div>
<div class="t" style="right:144.4000000000001px;top:330.5px;line-height:20px;color:#e6e6e6;">0.00%</div>
<div class="t" style="left:1781.5px;top:330.5px;line-height:20px;color:#a3a6ad;">52<span class="c">周低</span></div>
<div class="t" style="right:6.2000000000000455px;top:330.5px;line-height:20px;color:#e6e6e6;">0.91</div>
<div class="t bold" style="left:1646px;top:352.0px;line-height:20px;color:#d8d8d8;"><span class="c">实时申购赎回信息</span></div>
<div class="t" style="right:100px;top:352.0px;line-height:20px;color:#a3a6ad;"><span class="c">申购</span></div>
<div class="t" style="right:6px;top:352.0px;line-height:20px;color:#a3a6ad;"><span class="c">赎回</span></div>
<div class="t" style="left:1646px;top:376.0px;line-height:20px;color:#a3a6ad;"><span class="c">笔数</span></div>
<div class="t" style="right:100px;top:376.0px;line-height:20px;color:#e6e6e6;">0</div>
<div class="t" style="right:6px;top:376.0px;line-height:20px;color:#e6e6e6;">0</div>
<div class="t" style="left:1646px;top:399.0px;line-height:20px;color:#a3a6ad;"><span class="c">金额</span></div>
<div class="t" style="right:100px;top:399.0px;line-height:20px;color:#e6e6e6;">0</div>
<div class="t" style="right:6px;top:399.0px;line-height:20px;color:#e6e6e6;">0</div>
<div class="t" style="left:1646px;top:422.0px;line-height:20px;color:#a3a6ad;"><span class="c">份额</span></div>
<div class="t" style="right:100px;top:422.0px;line-height:20px;color:#e6e6e6;">0</div>
<div class="t" style="right:6px;top:422.0px;line-height:20px;color:#e6e6e6;">0</div>
<div class="t bold" style="left:1643.5px;top:446.5px;line-height:20px;color:#f0f0f0;"><span class="c">申赎清单</span></div>
<div class="t" style="left:1797.5px;width:200px;text-align:center;top:443.0px;line-height:20px;color:#d0d0d0;">...</div>
<div class="t" style="left:1646px;top:468.3px;line-height:20px;color:#a3a6ad;"><span class="c">最小申赎单位份额</span></div>
<div class="t" style="right:6.5px;top:468.3px;line-height:20px;color:#e6e6e6;">300<span class="c">万</span></div>
<div class="t" style="left:1646px;top:492.0px;line-height:20px;color:#a3a6ad;"><span class="c">现金替代比例上限</span></div>
<div class="t" style="right:6.5px;top:492.0px;line-height:20px;color:#e6e6e6;">70%</div>
<div class="t" style="left:1646px;top:514.3px;line-height:20px;color:#a3a6ad;"><span class="c">申购赎回允许情况</span></div>
<div class="t" style="right:6.5px;top:514.3px;line-height:20px;color:#e6e6e6;"><span class="c">申购赎回皆允许</span></div>
<div class="t" style="left:1646px;top:537.3px;line-height:20px;color:#a3a6ad;">T<span class="c">日预估现金差额</span></div>
<div class="t" style="right:6.5px;top:537.3px;line-height:20px;color:#e6e6e6;">19078.82<span class="c">元</span></div>
<div class="t" style="left:1646px;top:560.3px;line-height:20px;color:#a3a6ad;">T-1<span class="c">日单位申赎资产</span></div>
<div class="t" style="right:6.5px;top:560.3px;line-height:20px;color:#e6e6e6;">2875935.82<span class="c">元</span></div>
<div class="t bold" style="left:1643px;top:586.5px;line-height:20px;color:#f0f0f0;"><span class="c">近</span>5<span class="c">日净流入</span></div>
<div class="t bold" style="right:8.5px;top:586.5px;line-height:20px;color:#f0f0f0;"><span class="c">单位</span>(<span class="c">万元</span>)</div>
<div class="t" style="left:1570.5px;width:200px;text-align:center;top:612.8px;line-height:20px;color:#f2303a;">17873</div>
<div class="t" style="left:1570.5px;width:200px;text-align:center;top:783.3px;line-height:20px;color:#c0c2c8;">12-12</div>
<div class="t" style="left:1624.5px;width:200px;text-align:center;top:746.8px;line-height:20px;color:#18ba50;">-12743</div>
<div class="t" style="left:1624.5px;width:200px;text-align:center;top:783.3px;line-height:20px;color:#c0c2c8;">12-13</div>
<div class="t" style="left:1678.5px;width:200px;text-align:center;top:707.3px;line-height:20px;color:#18ba50;">-1720</div>
<div class="t" style="left:1678.5px;width:200px;text-align:center;top:783.3px;line-height:20px;color:#c0c2c8;">12-16</div>
<div class="t" style="left:1732.5px;width:200px;text-align:center;top:666.7px;line-height:20px;color:#f2303a;">3155</div>
<div class="t" style="left:1732.5px;width:200px;text-align:center;top:783.3px;line-height:20px;color:#c0c2c8;">12-17</div>
<div class="t" style="left:1786.5px;width:200px;text-align:center;top:760.9px;line-height:20px;color:#18ba50;">-16385</div>
<div class="t" style="left:1786.5px;width:200px;text-align:center;top:783.3px;line-height:20px;color:#c0c2c8;">12-18</div>
<div class="t" style="left:1648px;top:809.5px;line-height:20px;color:#a3a6ad;"><span class="c">天数</span></div>
<div class="t" style="right:132px;top:809.5px;line-height:20px;color:#a3a6ad;"><span class="c">净流天</span></div>
<div class="t" style="right:70.5px;top:809.5px;line-height:20px;color:#a3a6ad;"><span class="c">净流额</span></div>
<div class="t" style="right:6.5px;top:809.5px;line-height:20px;color:#a3a6ad;"><span class="c">净流率</span></div>
<div class="t" style="left:1561px;width:200px;text-align:center;top:832.8px;line-height:20px;color:#d0d0d0;">5</div>
<div class="t" style="right:132px;top:832.8px;line-height:20px;color:#f2303a;">2</div>
<div class="t" style="right:70.5px;top:832.8px;line-height:20px;color:#18ba50;">-9819</div>
<div class="t" style="right:6.5px;top:832.8px;line-height:20px;color:#18ba50;">-0.65%</div>
<div class="t" style="left:1561px;width:200px;text-align:center;top:856.0px;line-height:20px;color:#d0d0d0;">10</div>
<div class="t" style="right:132px;top:856.0px;line-height:20px;color:#f2303a;">5</div>
<div class="t" style="right:70.5px;top:856.0px;line-height:20px;color:#f2303a;">57779</div>
<div class="t" style="right:6.5px;top:856.0px;line-height:20px;color:#f2303a;">4.04%</div>
<div class="t" style="left:1561px;width:200px;text-align:center;top:879.2px;line-height:20px;color:#d0d0d0;">20</div>
<div class="t" style="right:132px;top:879.2px;line-height:20px;color:#f2303a;">9</div>
<div class="t" style="right:70.5px;top:879.2px;line-height:20px;color:#f2303a;">66002</div>
<div class="t" style="right:6.5px;top:879.2px;line-height:20px;color:#f2303a;">4.56%</div>
</body></html>
